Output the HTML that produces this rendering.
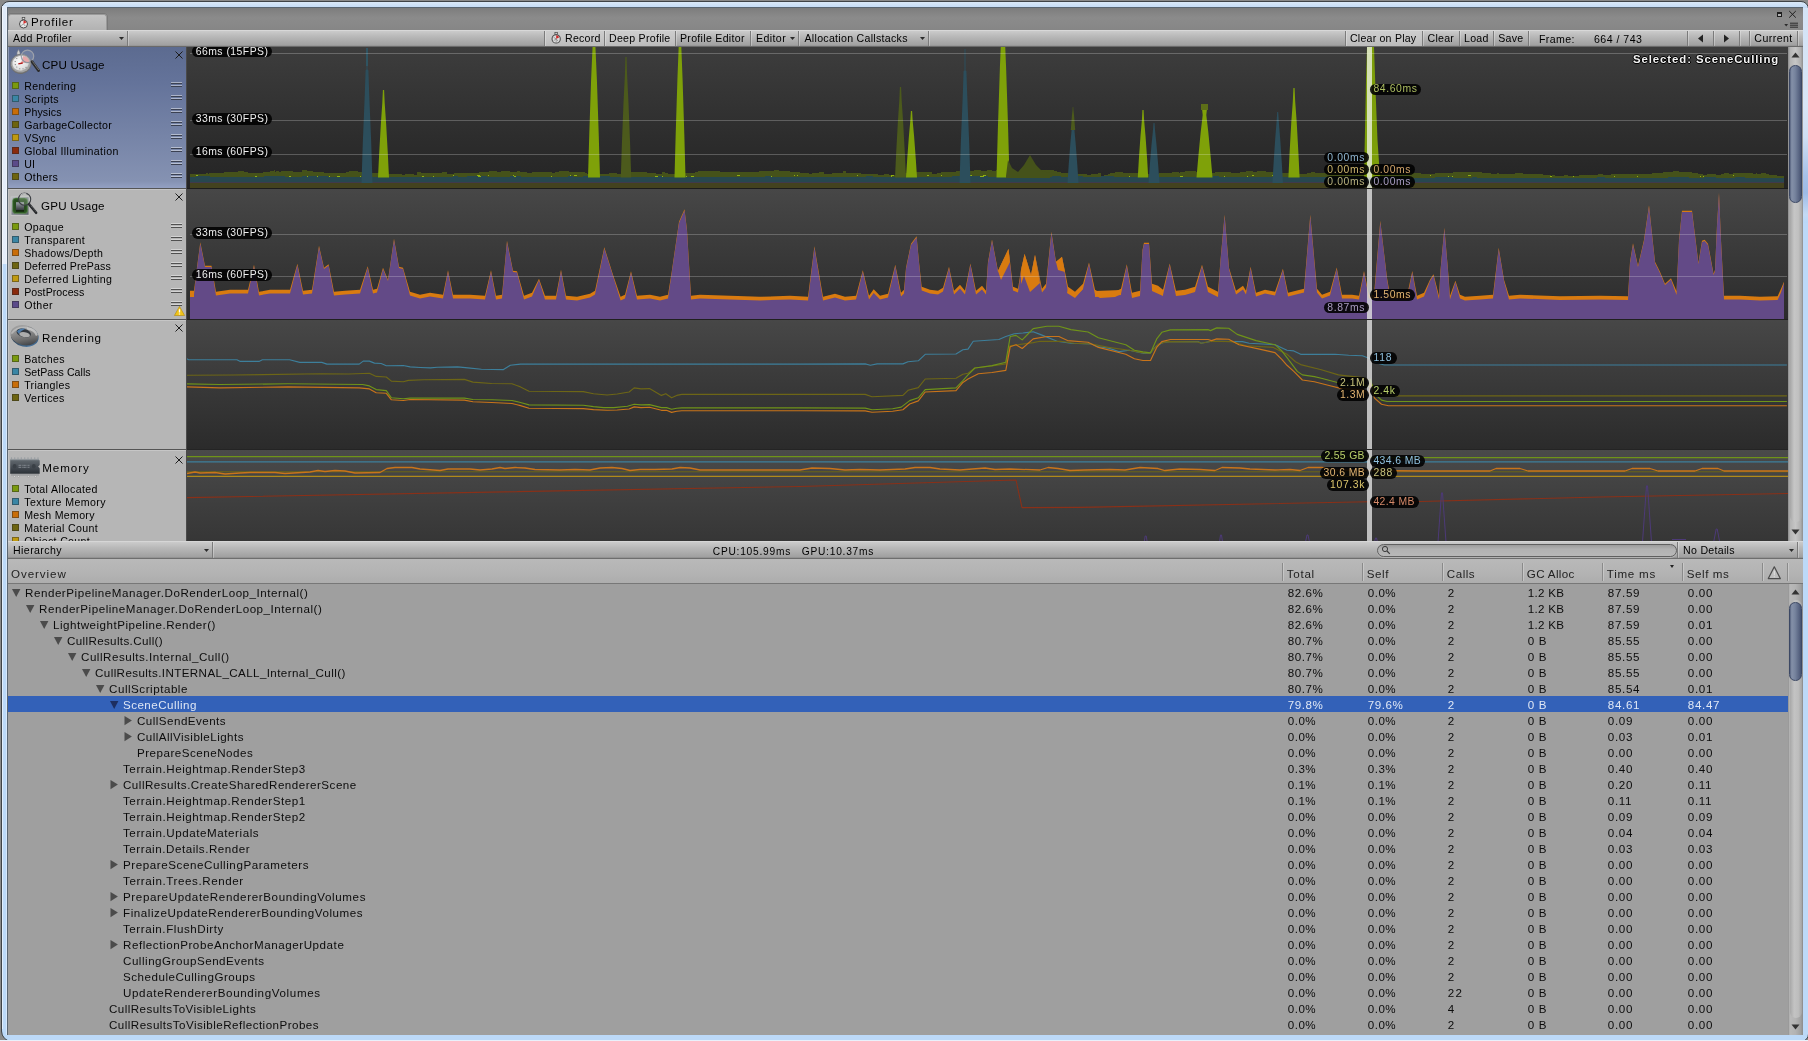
<!DOCTYPE html><html><head><meta charset="utf-8"><title>Profiler</title><style>
*{box-sizing:border-box;margin:0;padding:0}
html,body{width:1808px;height:1041px;overflow:hidden;background:#b9d7f5}
body{font-family:"Liberation Sans",sans-serif;position:relative;color:#000}
.abs{position:absolute}
.t{position:absolute;white-space:pre}
#inner{position:absolute;left:8px;top:8px;width:1795px;height:1027px;background:#a2a2a2;overflow:hidden;will-change:transform}
svg{position:absolute;overflow:visible}
</style></head><body>
<div class="abs" style="left:0;top:0;width:1808px;height:1041px;background:#8a8a8a"></div>
<div class="abs" style="left:1px;top:1px;width:1808px;height:1041px;border:1px solid #3f4347;border-radius:8px 8px 8px 11px;background:linear-gradient(#dbe9f8,#c5dcf6 5px,#bcd9f8 30px)"></div>
<div class="abs" style="left:7px;top:7px;width:1796px;height:1028px;background:#5a6672"></div>
<div class="abs" style="left:2px;top:6px;width:5px;height:258px;background:linear-gradient(#dfeaf8,#e3ecf8 60%,#e6eefa)"></div>
<div class="abs" style="left:1803px;top:8px;width:5px;height:215px;background:linear-gradient(#d3e3f6,#d9e6f6 45%,#cfdff3 60%,#a6c1e8 78%,#9dbbe6 86%,#c4daf4 96%,#b9d8f9)"></div>
<div class="abs" style="left:2px;top:8px;width:1px;height:1021px;background:rgba(255,255,255,.55)"></div>
<div class="abs" style="left:6px;top:8px;width:1px;height:1027px;background:rgba(255,255,255,.4)"></div>
<div class="abs" style="left:0;top:1040px;width:1808px;height:1px;background:#e9f1fb"></div>
<div id="inner">
<div class="abs" style="left:0px;top:0px;width:1795px;height:22px;background:linear-gradient(#7d7d7d,#8b8b8b 45%,#868686)"></div>
<div class="abs" style="left:0px;top:6px;width:99px;height:17px;border-radius:3px 3px 0 0;background:linear-gradient(#c4c4c4,#b1b1b1);border:1px solid #9a9a9a;border-bottom:none;box-shadow:0 0 0 .5px #6a6a6a"></div>
<svg style="left:10px;top:8.700px" width="12" height="12" viewBox="0 0 12 12"><rect x="4.2" y="0.6" width="2.6" height="2" fill="#ddd" stroke="#444" stroke-width=".7"/><circle cx="5.5" cy="7" r="4" fill="#e8e8e8" stroke="#4a4a4a" stroke-width="1"/><path d="M5.5 7V3.4A3.6 3.6 0 0 1 8.6 5.3z" fill="#d83030"/><path d="M5.5 7l-2.3 1.6M5.5 7l1.8 2" stroke="#888" stroke-width=".8"/></svg>
<div class="t" style="left:23.0px;top:6.0px;font-size:11.6px;letter-spacing:0.72px;line-height:16px;">Profiler</div>
<svg style="left:1768px;top:2px" width="28" height="20" viewBox="0 0 28 20"><rect x="1.500" y="2.500" width="4" height="4" fill="#b0b0b0" stroke="#1e1e1e"/><rect x="1" y="2" width="5" height="2" fill="#1e1e1e"/><path d="M13.200 1l6.600 6.600M19.800 1l-6.600 6.600" stroke="#1e1e1e" stroke-width="1" fill="none"/><path d="M8.300 14h3.800l-1.900 2.600z" fill="#2c2c2c"/><path d="M14 13.200h8M14 15.200h8M14 17.200h8" stroke="#2c2c2c" stroke-width="1"/></svg>
<div class="abs" style="left:0px;top:22px;width:1795px;height:17px;background:linear-gradient(#cbcbcb,#b9b9b9 35%,#a0a0a0 95%,#888);border-top:1px solid #d8d8d8;border-bottom:1px solid #6a6a6a"></div>
<div class="abs" style="left:537px;top:23px;width:59px;height:15px;background:linear-gradient(#cdcdcd,#c6c6c6 50%,#bbbbbb)"></div>
<div class="abs" style="left:597px;top:23px;width:70px;height:15px;background:linear-gradient(#cdcdcd,#c6c6c6 50%,#bbbbbb)"></div>
<div class="abs" style="left:1338px;top:23px;width:76px;height:15px;background:linear-gradient(#cdcdcd,#c6c6c6 50%,#bbbbbb)"></div>
<div class="abs" style="left:119px;top:23px;width:1px;height:15px;background:#7b7b7b"></div>
<div class="abs" style="left:120px;top:23px;width:1px;height:15px;background:rgba(255,255,255,.28)"></div>
<div class="abs" style="left:536px;top:23px;width:1px;height:15px;background:#7b7b7b"></div>
<div class="abs" style="left:537px;top:23px;width:1px;height:15px;background:rgba(255,255,255,.28)"></div>
<div class="abs" style="left:596px;top:23px;width:1px;height:15px;background:#7b7b7b"></div>
<div class="abs" style="left:597px;top:23px;width:1px;height:15px;background:rgba(255,255,255,.28)"></div>
<div class="abs" style="left:667px;top:23px;width:1px;height:15px;background:#7b7b7b"></div>
<div class="abs" style="left:668px;top:23px;width:1px;height:15px;background:rgba(255,255,255,.28)"></div>
<div class="abs" style="left:742px;top:23px;width:1px;height:15px;background:#7b7b7b"></div>
<div class="abs" style="left:743px;top:23px;width:1px;height:15px;background:rgba(255,255,255,.28)"></div>
<div class="abs" style="left:790px;top:23px;width:1px;height:15px;background:#7b7b7b"></div>
<div class="abs" style="left:791px;top:23px;width:1px;height:15px;background:rgba(255,255,255,.28)"></div>
<div class="abs" style="left:920px;top:23px;width:1px;height:15px;background:#7b7b7b"></div>
<div class="abs" style="left:921px;top:23px;width:1px;height:15px;background:rgba(255,255,255,.28)"></div>
<div class="abs" style="left:1337px;top:23px;width:1px;height:15px;background:#7b7b7b"></div>
<div class="abs" style="left:1338px;top:23px;width:1px;height:15px;background:rgba(255,255,255,.28)"></div>
<div class="abs" style="left:1414px;top:23px;width:1px;height:15px;background:#7b7b7b"></div>
<div class="abs" style="left:1415px;top:23px;width:1px;height:15px;background:rgba(255,255,255,.28)"></div>
<div class="abs" style="left:1451px;top:23px;width:1px;height:15px;background:#7b7b7b"></div>
<div class="abs" style="left:1452px;top:23px;width:1px;height:15px;background:rgba(255,255,255,.28)"></div>
<div class="abs" style="left:1485px;top:23px;width:1px;height:15px;background:#7b7b7b"></div>
<div class="abs" style="left:1486px;top:23px;width:1px;height:15px;background:rgba(255,255,255,.28)"></div>
<div class="abs" style="left:1520px;top:23px;width:1px;height:15px;background:#7b7b7b"></div>
<div class="abs" style="left:1521px;top:23px;width:1px;height:15px;background:rgba(255,255,255,.28)"></div>
<div class="abs" style="left:1679px;top:23px;width:1px;height:15px;background:#7b7b7b"></div>
<div class="abs" style="left:1680px;top:23px;width:1px;height:15px;background:rgba(255,255,255,.28)"></div>
<div class="abs" style="left:1705px;top:23px;width:1px;height:15px;background:#7b7b7b"></div>
<div class="abs" style="left:1706px;top:23px;width:1px;height:15px;background:rgba(255,255,255,.28)"></div>
<div class="abs" style="left:1731px;top:23px;width:1px;height:15px;background:#7b7b7b"></div>
<div class="abs" style="left:1732px;top:23px;width:1px;height:15px;background:rgba(255,255,255,.28)"></div>
<div class="abs" style="left:1741px;top:23px;width:1px;height:15px;background:#7b7b7b"></div>
<div class="abs" style="left:1742px;top:23px;width:1px;height:15px;background:rgba(255,255,255,.28)"></div>
<div class="abs" style="left:1789px;top:23px;width:1px;height:15px;background:#7b7b7b"></div>
<div class="abs" style="left:1790px;top:23px;width:1px;height:15px;background:rgba(255,255,255,.28)"></div>
<div class="t" style="left:5.0px;top:22.1px;font-size:10.6px;letter-spacing:0.29px;line-height:16px;">Add Profiler</div>
<svg style="left:111px;top:29px" width="5" height="3" viewBox="0 0 5 3"><path d="M0 0h5l-2.5 3z" fill="#2a2a2a"/></svg>
<svg style="left:543.400px;top:23.600px" width="11.500" height="12.650" viewBox="0 0 10 11"><rect x="3.4" y=".4" width="2.2" height="1.6" fill="#ccc" stroke="#444" stroke-width=".6"/><circle cx="4.5" cy="6" r="3.6" fill="#dedede" stroke="#4a4a4a" stroke-width=".9"/><path d="M4.5 6V2.900A3.100 3.100 0 0 1 7.200 4.500z" fill="#d02828"/><path d="M4.500 6l-2.200 1.500M4.500 6l1.700 2.100M4.500 6v2.800M4.500 6l-2.300-1.400" stroke="#8a8a8a" stroke-width=".7"/></svg>
<div class="t" style="left:557.0px;top:22.1px;font-size:10.6px;letter-spacing:0.25px;line-height:16px;">Record</div>
<div class="t" style="left:601.0px;top:22.1px;font-size:10.6px;letter-spacing:0.27px;line-height:16px;">Deep Profile</div>
<div class="t" style="left:672.0px;top:22.1px;font-size:10.6px;letter-spacing:0.29px;line-height:16px;">Profile Editor</div>
<div class="t" style="left:748.0px;top:22.1px;font-size:10.6px;letter-spacing:0.40px;line-height:16px;">Editor</div>
<svg style="left:782px;top:29px" width="5" height="3" viewBox="0 0 5 3"><path d="M0 0h5l-2.5 3z" fill="#2a2a2a"/></svg>
<div class="t" style="left:796.5px;top:22.1px;font-size:10.6px;letter-spacing:0.29px;line-height:16px;">Allocation Callstacks</div>
<svg style="left:911.5px;top:29px" width="5" height="3" viewBox="0 0 5 3"><path d="M0 0h5l-2.5 3z" fill="#2a2a2a"/></svg>
<div class="t" style="left:1342.0px;top:22.1px;font-size:10.6px;letter-spacing:0.21px;line-height:16px;">Clear on Play</div>
<div class="t" style="left:1419.5px;top:22.1px;font-size:10.6px;letter-spacing:0.26px;line-height:16px;">Clear</div>
<div class="t" style="left:1456.0px;top:22.1px;font-size:10.6px;letter-spacing:0.27px;line-height:16px;">Load</div>
<div class="t" style="left:1490.3px;top:22.1px;font-size:10.6px;letter-spacing:0.22px;line-height:16px;">Save</div>
<div class="t" style="left:1531.0px;top:23.1px;font-size:10.6px;letter-spacing:0.36px;line-height:16px;">Frame:</div>
<div class="t" style="left:1586.0px;top:23.1px;font-size:10.6px;letter-spacing:0.47px;line-height:16px;">664 / 743</div>
<svg style="left:1689px;top:26px" width="40" height="9" viewBox="0 0 40 9"><path d="M6 .5v8l-5-4z" fill="#222"/><path d="M27 .5v8l5-4z" fill="#222"/></svg>
<div class="t" style="left:1746.3px;top:22.1px;font-size:10.6px;letter-spacing:0.44px;line-height:16px;">Current</div>
<div class="abs" style="left:0px;top:39px;width:178px;height:141px;background:linear-gradient(#5c6b90,#64739a 25%,#8592b2 95%,#93a0c2);border-left:1px solid #8d98b3"></div>
<div class="abs" style="left:0px;top:180px;width:178px;height:1px;background:#555"></div>
<div class="abs" style="left:0px;top:181px;width:178px;height:130px;background:#b6b6b6;border-top:1px solid #c6c6c6;border-left:1px solid #c4c4c4"></div>
<div class="abs" style="left:0px;top:311px;width:178px;height:1px;background:#555"></div>
<div class="abs" style="left:0px;top:312px;width:178px;height:129px;background:#b6b6b6;border-top:1px solid #c6c6c6;border-left:1px solid #c4c4c4"></div>
<div class="abs" style="left:0px;top:441px;width:178px;height:1px;background:#555"></div>
<div class="abs" style="left:0px;top:442px;width:178px;height:91px;background:#b6b6b6;border-top:1px solid #c6c6c6;border-left:1px solid #c4c4c4"></div>
<div class="abs" style="left:178px;top:39px;width:1px;height:494px;background:#4a4a4a"></div>
<svg style="left:167px;top:42.5px" width="8" height="8" viewBox="0 0 8 8"><path d="M.5 .5l7 7M7.5 .5l-7 7" stroke="#1c1c1c" stroke-width="1" fill="none"/></svg>
<div class="t" style="left:34.0px;top:49.0px;font-size:11.6px;letter-spacing:0.17px;line-height:16px;">CPU Usage</div>
<div class="abs" style="left:4px;top:74.0px;width:7px;height:7px;background:#7a9a0e;border:1px solid rgba(40,40,40,.45)"></div>
<div class="t" style="left:16.2px;top:69.5px;font-size:10.6px;letter-spacing:0.34px;line-height:16px;">Rendering</div>
<div class="abs" style="left:163px;top:73.5px;width:11px;height:1px;background:rgba(255,255,255,.45)"></div>
<div class="abs" style="left:163px;top:74.5px;width:11px;height:1px;background:#3b4152"></div>
<div class="abs" style="left:163px;top:76.5px;width:11px;height:1px;background:rgba(255,255,255,.45)"></div>
<div class="abs" style="left:163px;top:77.5px;width:11px;height:1px;background:#3b4152"></div>
<div class="abs" style="left:4px;top:87.0px;width:7px;height:7px;background:#3a86a5;border:1px solid rgba(40,40,40,.45)"></div>
<div class="t" style="left:16.2px;top:82.5px;font-size:10.6px;letter-spacing:0.33px;line-height:16px;">Scripts</div>
<div class="abs" style="left:163px;top:86.5px;width:11px;height:1px;background:rgba(255,255,255,.45)"></div>
<div class="abs" style="left:163px;top:87.5px;width:11px;height:1px;background:#3b4152"></div>
<div class="abs" style="left:163px;top:89.5px;width:11px;height:1px;background:rgba(255,255,255,.45)"></div>
<div class="abs" style="left:163px;top:90.5px;width:11px;height:1px;background:#3b4152"></div>
<div class="abs" style="left:4px;top:100.0px;width:7px;height:7px;background:#c96d08;border:1px solid rgba(40,40,40,.45)"></div>
<div class="t" style="left:16.2px;top:95.5px;font-size:10.6px;letter-spacing:0.14px;line-height:16px;">Physics</div>
<div class="abs" style="left:163px;top:99.5px;width:11px;height:1px;background:rgba(255,255,255,.45)"></div>
<div class="abs" style="left:163px;top:100.5px;width:11px;height:1px;background:#3b4152"></div>
<div class="abs" style="left:163px;top:102.5px;width:11px;height:1px;background:rgba(255,255,255,.45)"></div>
<div class="abs" style="left:163px;top:103.5px;width:11px;height:1px;background:#3b4152"></div>
<div class="abs" style="left:4px;top:113.0px;width:7px;height:7px;background:#6d6410;border:1px solid rgba(40,40,40,.45)"></div>
<div class="t" style="left:16.2px;top:108.5px;font-size:10.6px;letter-spacing:0.30px;line-height:16px;">GarbageCollector</div>
<div class="abs" style="left:163px;top:112.5px;width:11px;height:1px;background:rgba(255,255,255,.45)"></div>
<div class="abs" style="left:163px;top:113.5px;width:11px;height:1px;background:#3b4152"></div>
<div class="abs" style="left:163px;top:115.5px;width:11px;height:1px;background:rgba(255,255,255,.45)"></div>
<div class="abs" style="left:163px;top:116.5px;width:11px;height:1px;background:#3b4152"></div>
<div class="abs" style="left:4px;top:126.0px;width:7px;height:7px;background:#c09a10;border:1px solid rgba(40,40,40,.45)"></div>
<div class="t" style="left:16.2px;top:121.5px;font-size:10.6px;letter-spacing:0.16px;line-height:16px;">VSync</div>
<div class="abs" style="left:163px;top:125.5px;width:11px;height:1px;background:rgba(255,255,255,.45)"></div>
<div class="abs" style="left:163px;top:126.5px;width:11px;height:1px;background:#3b4152"></div>
<div class="abs" style="left:163px;top:128.5px;width:11px;height:1px;background:rgba(255,255,255,.45)"></div>
<div class="abs" style="left:163px;top:129.5px;width:11px;height:1px;background:#3b4152"></div>
<div class="abs" style="left:4px;top:139.0px;width:7px;height:7px;background:#8a2a0c;border:1px solid rgba(40,40,40,.45)"></div>
<div class="t" style="left:16.2px;top:134.5px;font-size:10.6px;letter-spacing:0.39px;line-height:16px;">Global Illumination</div>
<div class="abs" style="left:163px;top:138.5px;width:11px;height:1px;background:rgba(255,255,255,.45)"></div>
<div class="abs" style="left:163px;top:139.5px;width:11px;height:1px;background:#3b4152"></div>
<div class="abs" style="left:163px;top:141.5px;width:11px;height:1px;background:rgba(255,255,255,.45)"></div>
<div class="abs" style="left:163px;top:142.5px;width:11px;height:1px;background:#3b4152"></div>
<div class="abs" style="left:4px;top:152.0px;width:7px;height:7px;background:#5b4a8a;border:1px solid rgba(40,40,40,.45)"></div>
<div class="t" style="left:16.2px;top:147.5px;font-size:10.6px;letter-spacing:0.08px;line-height:16px;">UI</div>
<div class="abs" style="left:163px;top:151.5px;width:11px;height:1px;background:rgba(255,255,255,.45)"></div>
<div class="abs" style="left:163px;top:152.5px;width:11px;height:1px;background:#3b4152"></div>
<div class="abs" style="left:163px;top:154.5px;width:11px;height:1px;background:rgba(255,255,255,.45)"></div>
<div class="abs" style="left:163px;top:155.5px;width:11px;height:1px;background:#3b4152"></div>
<div class="abs" style="left:4px;top:165.0px;width:7px;height:7px;background:#6d6410;border:1px solid rgba(40,40,40,.45)"></div>
<div class="t" style="left:16.2px;top:160.5px;font-size:10.6px;letter-spacing:0.38px;line-height:16px;">Others</div>
<div class="abs" style="left:163px;top:164.5px;width:11px;height:1px;background:rgba(255,255,255,.45)"></div>
<div class="abs" style="left:163px;top:165.5px;width:11px;height:1px;background:#3b4152"></div>
<div class="abs" style="left:163px;top:167.5px;width:11px;height:1px;background:rgba(255,255,255,.45)"></div>
<div class="abs" style="left:163px;top:168.5px;width:11px;height:1px;background:#3b4152"></div>
<svg style="left:167px;top:184.8px" width="8" height="8" viewBox="0 0 8 8"><path d="M.5 .5l7 7M7.5 .5l-7 7" stroke="#1c1c1c" stroke-width="1" fill="none"/></svg>
<div class="t" style="left:33.0px;top:189.7px;font-size:11.6px;letter-spacing:0.21px;line-height:16px;">GPU Usage</div>
<div class="abs" style="left:4px;top:215.0px;width:7px;height:7px;background:#7a9a0e;border:1px solid rgba(40,40,40,.45)"></div>
<div class="t" style="left:16.2px;top:210.5px;font-size:10.6px;letter-spacing:0.33px;line-height:16px;">Opaque</div>
<div class="abs" style="left:163px;top:214.5px;width:11px;height:1px;background:rgba(255,255,255,.4)"></div>
<div class="abs" style="left:163px;top:215.5px;width:11px;height:1px;background:#505050"></div>
<div class="abs" style="left:163px;top:217.5px;width:11px;height:1px;background:rgba(255,255,255,.4)"></div>
<div class="abs" style="left:163px;top:218.5px;width:11px;height:1px;background:#505050"></div>
<div class="abs" style="left:4px;top:228.0px;width:7px;height:7px;background:#3a86a5;border:1px solid rgba(40,40,40,.45)"></div>
<div class="t" style="left:16.2px;top:223.5px;font-size:10.6px;letter-spacing:0.39px;line-height:16px;">Transparent</div>
<div class="abs" style="left:163px;top:227.5px;width:11px;height:1px;background:rgba(255,255,255,.4)"></div>
<div class="abs" style="left:163px;top:228.5px;width:11px;height:1px;background:#505050"></div>
<div class="abs" style="left:163px;top:230.5px;width:11px;height:1px;background:rgba(255,255,255,.4)"></div>
<div class="abs" style="left:163px;top:231.5px;width:11px;height:1px;background:#505050"></div>
<div class="abs" style="left:4px;top:241.0px;width:7px;height:7px;background:#c96d08;border:1px solid rgba(40,40,40,.45)"></div>
<div class="t" style="left:16.2px;top:236.5px;font-size:10.6px;letter-spacing:0.32px;line-height:16px;">Shadows/Depth</div>
<div class="abs" style="left:163px;top:240.5px;width:11px;height:1px;background:rgba(255,255,255,.4)"></div>
<div class="abs" style="left:163px;top:241.5px;width:11px;height:1px;background:#505050"></div>
<div class="abs" style="left:163px;top:243.5px;width:11px;height:1px;background:rgba(255,255,255,.4)"></div>
<div class="abs" style="left:163px;top:244.5px;width:11px;height:1px;background:#505050"></div>
<div class="abs" style="left:4px;top:254.0px;width:7px;height:7px;background:#6d6410;border:1px solid rgba(40,40,40,.45)"></div>
<div class="t" style="left:16.2px;top:249.5px;font-size:10.6px;letter-spacing:0.16px;line-height:16px;">Deferred PrePass</div>
<div class="abs" style="left:163px;top:253.5px;width:11px;height:1px;background:rgba(255,255,255,.4)"></div>
<div class="abs" style="left:163px;top:254.5px;width:11px;height:1px;background:#505050"></div>
<div class="abs" style="left:163px;top:256.5px;width:11px;height:1px;background:rgba(255,255,255,.4)"></div>
<div class="abs" style="left:163px;top:257.5px;width:11px;height:1px;background:#505050"></div>
<div class="abs" style="left:4px;top:267.0px;width:7px;height:7px;background:#c09a10;border:1px solid rgba(40,40,40,.45)"></div>
<div class="t" style="left:16.2px;top:262.5px;font-size:10.6px;letter-spacing:0.41px;line-height:16px;">Deferred Lighting</div>
<div class="abs" style="left:163px;top:266.5px;width:11px;height:1px;background:rgba(255,255,255,.4)"></div>
<div class="abs" style="left:163px;top:267.5px;width:11px;height:1px;background:#505050"></div>
<div class="abs" style="left:163px;top:269.5px;width:11px;height:1px;background:rgba(255,255,255,.4)"></div>
<div class="abs" style="left:163px;top:270.5px;width:11px;height:1px;background:#505050"></div>
<div class="abs" style="left:4px;top:280.0px;width:7px;height:7px;background:#8a2a0c;border:1px solid rgba(40,40,40,.45)"></div>
<div class="t" style="left:16.2px;top:275.5px;font-size:10.6px;letter-spacing:0.06px;line-height:16px;">PostProcess</div>
<div class="abs" style="left:163px;top:279.5px;width:11px;height:1px;background:rgba(255,255,255,.4)"></div>
<div class="abs" style="left:163px;top:280.5px;width:11px;height:1px;background:#505050"></div>
<div class="abs" style="left:163px;top:282.5px;width:11px;height:1px;background:rgba(255,255,255,.4)"></div>
<div class="abs" style="left:163px;top:283.5px;width:11px;height:1px;background:#505050"></div>
<div class="abs" style="left:4px;top:293.0px;width:7px;height:7px;background:#5b4a8a;border:1px solid rgba(40,40,40,.45)"></div>
<div class="t" style="left:16.2px;top:288.5px;font-size:10.6px;letter-spacing:0.48px;line-height:16px;">Other</div>
<div class="abs" style="left:163px;top:292.5px;width:11px;height:1px;background:rgba(255,255,255,.4)"></div>
<div class="abs" style="left:163px;top:293.5px;width:11px;height:1px;background:#505050"></div>
<div class="abs" style="left:163px;top:295.5px;width:11px;height:1px;background:rgba(255,255,255,.4)"></div>
<div class="abs" style="left:163px;top:296.5px;width:11px;height:1px;background:#505050"></div>
<svg style="left:166px;top:298px" width="11" height="10" viewBox="0 0 11 10"><path d="M5.5 .4L10.6 9.5H.4z" fill="#f0c419" stroke="#b48a08" stroke-width=".6"/><path d="M5.5 3.2v3.2M5.5 7.4v1" stroke="#fff" stroke-width="1.3"/></svg>
<svg style="left:167px;top:315.5px" width="8" height="8" viewBox="0 0 8 8"><path d="M.5 .5l7 7M7.5 .5l-7 7" stroke="#1c1c1c" stroke-width="1" fill="none"/></svg>
<div class="t" style="left:34.0px;top:322.0px;font-size:11.6px;letter-spacing:0.69px;line-height:16px;">Rendering</div>
<div class="abs" style="left:4px;top:347.0px;width:7px;height:7px;background:#7a9a0e;border:1px solid rgba(40,40,40,.45)"></div>
<div class="t" style="left:16.2px;top:342.5px;font-size:10.6px;letter-spacing:0.33px;line-height:16px;">Batches</div>
<div class="abs" style="left:4px;top:360.0px;width:7px;height:7px;background:#3a86a5;border:1px solid rgba(40,40,40,.45)"></div>
<div class="t" style="left:16.2px;top:355.5px;font-size:10.6px;letter-spacing:0.04px;line-height:16px;">SetPass Calls</div>
<div class="abs" style="left:4px;top:373.0px;width:7px;height:7px;background:#c96d08;border:1px solid rgba(40,40,40,.45)"></div>
<div class="t" style="left:16.2px;top:368.5px;font-size:10.6px;letter-spacing:0.32px;line-height:16px;">Triangles</div>
<div class="abs" style="left:4px;top:386.0px;width:7px;height:7px;background:#6d6410;border:1px solid rgba(40,40,40,.45)"></div>
<div class="t" style="left:16.2px;top:381.5px;font-size:10.6px;letter-spacing:0.36px;line-height:16px;">Vertices</div>
<div class="abs" style="left:0;top:442px;width:178px;height:91px;overflow:hidden"><div style="position:absolute;left:-0px;top:-442px;width:178px;height:600px">
<svg style="left:167px;top:447.5px" width="8" height="8" viewBox="0 0 8 8"><path d="M.5 .5l7 7M7.5 .5l-7 7" stroke="#1c1c1c" stroke-width="1" fill="none"/></svg>
<div class="t" style="left:34.2px;top:452.2px;font-size:11.6px;letter-spacing:0.95px;line-height:16px;">Memory</div>
<div class="abs" style="left:4px;top:477.0px;width:7px;height:7px;background:#7a9a0e;border:1px solid rgba(40,40,40,.45)"></div>
<div class="t" style="left:16.2px;top:472.5px;font-size:10.6px;letter-spacing:0.35px;line-height:16px;">Total Allocated</div>
<div class="abs" style="left:4px;top:490.0px;width:7px;height:7px;background:#3a86a5;border:1px solid rgba(40,40,40,.45)"></div>
<div class="t" style="left:16.2px;top:485.5px;font-size:10.6px;letter-spacing:0.42px;line-height:16px;">Texture Memory</div>
<div class="abs" style="left:4px;top:503.0px;width:7px;height:7px;background:#c96d08;border:1px solid rgba(40,40,40,.45)"></div>
<div class="t" style="left:16.2px;top:498.5px;font-size:10.6px;letter-spacing:0.32px;line-height:16px;">Mesh Memory</div>
<div class="abs" style="left:4px;top:516.0px;width:7px;height:7px;background:#6d6410;border:1px solid rgba(40,40,40,.45)"></div>
<div class="t" style="left:16.2px;top:511.5px;font-size:10.6px;letter-spacing:0.36px;line-height:16px;">Material Count</div>
<div class="abs" style="left:4px;top:529.0px;width:7px;height:7px;background:#c09a10;border:1px solid rgba(40,40,40,.45)"></div>
<div class="t" style="left:16.2px;top:524.5px;font-size:10.6px;letter-spacing:0.34px;line-height:16px;">Object Count</div>
</div></div>
<svg style="left:2px;top:39px" width="34" height="32" viewBox="10 47 34 32">
<defs><radialGradient id="gw" cx=".42" cy=".38" r=".75"><stop offset="0" stop-color="#fbfbfb"/><stop offset=".72" stop-color="#dedede"/><stop offset="1" stop-color="#a8a8a8"/></radialGradient></defs>
<path d="M17 52.600l1.500-3.200 1.500 3.200v2.200h-3z" fill="#cfcfcf" stroke="#7f838c" stroke-width=".6"/>
<ellipse cx="20.900" cy="64.600" rx="10.300" ry="9.300" fill="#6e6e6e" transform="rotate(-12 20.900 64.600)"/>
<ellipse cx="20.900" cy="63.600" rx="10.300" ry="9.300" fill="#a4a4a4" stroke="#6f6f6f" stroke-width=".7" transform="rotate(-12 20.900 63.600)"/>
<ellipse cx="20.700" cy="63.200" rx="8.300" ry="7.400" fill="url(#gw)" transform="rotate(-12 20.700 63.200)"/>
<g fill="#6a6a6a"><circle cx="15.200" cy="61.500" r=".55"/><circle cx="15.300" cy="64.600" r=".55"/><circle cx="16.800" cy="67" r=".5"/><circle cx="19.800" cy="68.700" r=".5"/><circle cx="23" cy="68.800" r=".5"/><circle cx="26" cy="67.300" r=".55"/><circle cx="16.800" cy="58.600" r=".5"/></g>
<path d="M21 63.200L23.200 56A8 7.300 0 0 1 29.300 62z" fill="#e89a9a"/>
<circle cx="27.500" cy="56.300" r="6.200" fill="rgba(235,240,250,.14)" stroke="#9da1aa" stroke-width="1.200"/>
<path d="M22.300 59.500a6.200 6.200 0 0 0 9.500 1.800" fill="none" stroke="#8a8f96" stroke-width=".9"/>
<path d="M18.300 63.900l4.400-.9" stroke="#b01c1c" stroke-width="1.300"/>
<path d="M32 61.600l6.600 9" stroke="#2c2c2c" stroke-width="2.700" stroke-linecap="round"/>
<path d="M32.700 61.700l5.900 8" stroke="#8a8a8a" stroke-width=".7" stroke-linecap="round"/>
</svg>
<svg style="left:2px;top:182px" width="34" height="30" viewBox="10 190 34 30">
<defs><linearGradient id="gq" x1="0" y1="0" x2="1" y2="1"><stop offset="0" stop-color="#b9bcc0"/><stop offset=".5" stop-color="#7d838c"/><stop offset="1" stop-color="#5a5f68"/></linearGradient>
<linearGradient id="gq2" x1="0" y1="0" x2="0" y2="1"><stop offset="0" stop-color="#9aa0a6"/><stop offset="1" stop-color="#33373b"/></linearGradient></defs>
<rect x="10.600" y="196.400" width="18.800" height="19.400" fill="#c6c6c6"/>
<rect x="11.400" y="197.200" width="17.200" height="17.600" fill="url(#gq)"/>
<rect x="12.500" y="198" width="15.200" height="15.600" rx="3.400" fill="#2e5a24" stroke="#6f9a62" stroke-width=".5"/>
<rect x="14.200" y="199.800" width="11.800" height="12" rx="2" fill="#274d1e"/>
<rect x="16" y="202.200" width="8" height="8" fill="url(#gq2)"/>
<rect x="16" y="210.200" width="8" height="1.400" fill="#10200c"/>
<circle cx="24.600" cy="199.200" r="6.100" fill="rgba(215,225,215,.22)" stroke="#3d4045" stroke-width="1.100"/>
<path d="M20.300 195.300a6 6 0 0 1 6-2" fill="none" stroke="#d8d8d8" stroke-width=".8"/>
<path d="M29.300 204.500l6.800 8.300" stroke="#26282b" stroke-width="2.600" stroke-linecap="round"/>
<path d="M30 204.500l6 7.400" stroke="#a8a8a8" stroke-width=".6" stroke-dasharray="1 1"/>
</svg>
<svg style="left:1px;top:314px" width="34" height="28" viewBox="9 322 34 28">
<defs><linearGradient id="gt" x1=".15" y1="0" x2=".75" y2="1"><stop offset="0" stop-color="#a6a6a6"/><stop offset=".35" stop-color="#929292"/><stop offset=".7" stop-color="#6c6c6c"/><stop offset="1" stop-color="#3a3d42"/></linearGradient>
<linearGradient id="gt2" x1="0" y1="0" x2="1" y2="0"><stop offset="0" stop-color="#2c3a48"/><stop offset=".7" stop-color="#4a76a0"/><stop offset="1" stop-color="#3d6185"/></linearGradient></defs>
<ellipse cx="24.800" cy="336.400" rx="14" ry="10.300" fill="url(#gt2)" transform="rotate(12 24.800 336.400)"/>
<ellipse cx="24.300" cy="335.200" rx="14" ry="10" fill="url(#gt)" transform="rotate(12 24.300 335.200)"/>
<path d="M12 333c3-4 9-6 15-5.500" fill="none" stroke="#d6d6d6" stroke-width="1.800" opacity=".5" stroke-linecap="round"/>
<path d="M28 328.500c4 .8 7.500 3 8.500 6" fill="none" stroke="#e4e4e4" stroke-width="2.400" opacity=".6" stroke-linecap="round"/>
<ellipse cx="23.800" cy="333" rx="7.400" ry="4.200" fill="#33383e" transform="rotate(14 23.800 333)"/>
<path d="M17 331.500c1.500-2.600 5-3.600 8.500-2.600-2.500.6-5 2.200-6.500 5z" fill="#4f7dab"/>
<ellipse cx="24.600" cy="334.700" rx="5.400" ry="2.500" fill="#adadad" transform="rotate(10 24.600 334.600)"/>
</svg>
<svg style="left:1px;top:446px" width="34" height="26" viewBox="9 454 34 26">
<defs><linearGradient id="gm" x1="0" y1="0" x2="0" y2="1"><stop offset="0" stop-color="#7a8186"/><stop offset=".12" stop-color="#5d646a"/><stop offset=".55" stop-color="#454b52"/><stop offset="1" stop-color="#2a3036"/></linearGradient></defs>
<path d="M11.500 457.300v2.500M14.700 457.300v2.500M18 457.300v2.500M21.300 457.300v2.500M24.700 457.300v2.500M28 457.300v2.500M31.300 457.300v2.500M34.700 457.300v2.500M38 457.300v2.500" stroke="#9aa0a4" stroke-width="1.100"/>
<path d="M11 474.200h28v1.400h-28z" fill="#8b8f92" opacity=".7"/>
<g fill="#e6e6e6" stroke="#8f8f8f" stroke-width=".5"><circle cx="14.400" cy="476.600" r=".9"/><circle cx="18.500" cy="476.600" r=".9"/><circle cx="28.400" cy="476.600" r=".9"/><circle cx="35.400" cy="476.600" r=".9"/></g>
<path d="M10.200 459.400h28.600l.9 1v4.600l-1.600 1.600 1.600 1.600v5.600h-29.500z" fill="url(#gm)"/>
<path d="M10.200 459.400h28.600" stroke="#8e959a" stroke-width=".9"/>
<ellipse cx="14.600" cy="466.300" rx="1.900" ry="2.200" fill="#3a4046"/><ellipse cx="33.800" cy="466.300" rx="1.900" ry="2.200" fill="#3a4046"/>
<path d="M18.500 465.300h11M18.500 467.300h11" stroke="#8a9096" stroke-width=".9" stroke-dasharray="2.500 .7 1 .6"/>
</svg>
<svg style="left:179px;top:39px" width="1601" height="494" viewBox="187 47 1601 494">
<defs>
<linearGradient id="gc" x1="0" y1="0" x2="0" y2="1"><stop offset="0" stop-color="#3d3d3d"/><stop offset="1" stop-color="#242424"/></linearGradient>
<linearGradient id="gg" x1="0" y1="0" x2="0" y2="1"><stop offset="0" stop-color="#474747"/><stop offset="1" stop-color="#2b2b2b"/></linearGradient>
<linearGradient id="gm2" x1="0" y1="0" x2="0" y2="1"><stop offset="0" stop-color="#4a4a4a"/><stop offset="1" stop-color="#363636"/></linearGradient>
<clipPath id="ccpu"><rect x="190" y="47" width="1594" height="141"/></clipPath>
<clipPath id="cgpu"><rect x="190" y="189" width="1594" height="130"/></clipPath>
<clipPath id="cren"><rect x="187" y="320" width="1601" height="129"/></clipPath>
<clipPath id="cmem"><rect x="187" y="450" width="1601" height="91"/></clipPath>
</defs>
<rect x="187" y="47" width="1601" height="141" fill="url(#gc)"/>
<rect x="187" y="188" width="1601" height="1" fill="#1c1c1c"/>
<rect x="187" y="189" width="1601" height="130" fill="url(#gg)"/>
<rect x="187" y="319" width="1601" height="1" fill="#202020"/>
<rect x="187" y="320" width="1601" height="129" fill="url(#gg)"/>
<rect x="187" y="449" width="1601" height="1" fill="#242424"/>
<rect x="187" y="450" width="1601" height="91" fill="url(#gm2)"/>
<g clip-path="url(#ccpu)" shape-rendering="crispEdges">
<path d="M190.0 174.5 L199.0 174.1 L199.0 174.1 L208.0 173.3 L208.0 173.6 L217.0 172.8 L217.0 173.2 L224.0 172.8 L224.0 172.1 L229.0 172.0 L229.0 172.0 L238.0 172.1 L238.0 171.2 L244.0 171.4 L244.0 172.4 L251.0 172.6 L251.0 172.6 L260.0 172.6 L260.0 172.7 L263.0 172.6 L263.0 172.5 L270.0 172.0 L270.0 170.8 L275.0 170.4 L275.0 171.6 L279.0 171.3 L279.0 171.6 L284.0 171.3 L284.0 170.9 L287.0 170.8 L287.0 170.8 L293.0 170.6 L293.0 172.2 L302.0 172.5 L302.0 169.7 L307.0 170.1 L307.0 171.2 L310.0 171.5 L310.0 170.6 L313.0 170.9 L313.0 171.8 L318.0 172.2 L318.0 172.2 L321.0 172.4 L321.0 172.1 L324.0 172.3 L324.0 172.6 L332.0 172.8 L332.0 172.8 L339.0 172.7 L339.0 172.7 L344.0 172.6 L344.0 172.6 L349.0 172.4 L349.0 170.8 L358.0 170.6 L358.0 172.0 L366.0 172.2 L366.0 172.4 L372.0 172.7 L372.0 172.8 L379.0 173.4 L379.0 173.4 L383.0 173.8 L383.0 173.8 L389.0 174.2 L389.0 173.6 L393.0 173.8 L393.0 174.0 L402.0 174.1 L402.0 175.0 L405.0 174.9 L405.0 174.4 L414.0 173.8 L414.0 174.9 L417.0 174.6 L417.0 172.0 L421.0 171.7 L421.0 173.3 L430.0 172.8 L430.0 173.3 L435.0 173.2 L435.0 172.7 L438.0 172.7 L438.0 172.7 L442.0 172.8 L442.0 171.8 L447.0 172.0 L447.0 173.7 L454.0 174.0 L454.0 173.3 L458.0 173.4 L458.0 173.4 L462.0 173.4 L462.0 173.4 L471.0 173.1 L471.0 173.5 L475.0 173.3 L475.0 172.9 L482.0 172.2 L482.0 172.2 L488.0 171.6 L488.0 171.6 L494.0 171.1 L494.0 170.9 L497.0 170.8 L497.0 172.5 L501.0 172.3 L501.0 170.8 L510.0 170.9 L510.0 171.7 L517.0 172.1 L517.0 171.3 L520.0 171.5 L520.0 171.5 L527.0 172.0 L527.0 173.0 L532.0 173.2 L532.0 172.2 L536.0 172.3 L536.0 172.2 L542.0 172.1 L542.0 172.2 L545.0 172.1 L545.0 172.1 L552.0 171.8 L552.0 173.4 L555.0 173.2 L555.0 171.7 L561.0 171.4 L561.0 171.4 L569.0 171.4 L569.0 172.4 L573.0 172.5 L573.0 171.6 L576.0 171.8 L576.0 171.7 L584.0 172.4 L584.0 172.4 L587.0 172.8 L587.0 173.8 L593.0 174.4 L593.0 172.2 L598.0 172.6 L598.0 173.8 L601.0 174.0 L601.0 174.0 L609.0 174.2 L609.0 172.7 L617.0 172.5 L617.0 173.9 L622.0 173.7 L622.0 173.7 L628.0 173.3 L628.0 171.9 L634.0 171.7 L634.0 171.7 L641.0 171.6 L641.0 172.0 L647.0 172.2 L647.0 173.2 L654.0 173.5 L654.0 173.4 L662.0 173.8 L662.0 172.4 L668.0 172.6 L668.0 174.1 L676.0 174.0 L676.0 174.8 L682.0 174.4 L682.0 173.8 L691.0 173.0 L691.0 172.9 L698.0 172.2 L698.0 171.3 L702.0 171.0 L702.0 171.0 L709.0 170.6 L709.0 171.4 L712.0 171.4 L712.0 171.4 L720.0 171.5 L720.0 171.8 L724.0 172.0 L724.0 171.7 L730.0 172.0 L730.0 172.0 L735.0 172.2 L735.0 172.2 L739.0 172.3 L739.0 172.3 L748.0 172.1 L748.0 172.1 L754.0 171.8 L754.0 171.8 L759.0 171.5 L759.0 171.5 L765.0 171.1 L765.0 171.1 L774.0 170.8 L774.0 169.6 L779.0 169.7 L779.0 170.8 L785.0 171.1 L785.0 171.1 L794.0 171.9 L794.0 171.9 L801.0 172.6 L801.0 172.6 L809.0 173.2 L809.0 173.9 L812.0 174.1 L812.0 172.9 L819.0 173.0 L819.0 172.3 L824.0 172.2 L824.0 173.9 L832.0 173.5 L832.0 173.0 L836.0 172.9 L836.0 172.8 L839.0 172.7 L839.0 172.7 L843.0 172.7 L843.0 171.1 L846.0 171.1 L846.0 172.7 L853.0 173.0 L853.0 173.0 L861.0 173.5 L861.0 173.5 L867.0 174.0 L867.0 174.0 L870.0 174.2 L870.0 174.2 L873.0 174.4 L873.0 174.4 L882.0 174.6 L882.0 174.6 L889.0 174.3 L889.0 175.3 L898.0 174.5 L898.0 173.5 L907.0 172.7 L907.0 172.7 L915.0 172.3 L915.0 172.3 L921.0 172.2 L921.0 172.2 L924.0 172.2 L924.0 172.2 L932.0 172.5 L932.0 173.7 L937.0 173.9 L937.0 172.7 L941.0 172.8 L941.0 171.6 L950.0 171.6 L950.0 172.4 L956.0 172.2 L956.0 171.0 L963.0 170.4 L963.0 172.0 L971.0 171.3 L971.0 170.7 L974.0 170.5 L974.0 170.3 L981.0 170.0 L981.0 170.7 L987.0 170.6 L987.0 170.3 L996.0 170.7 L996.0 170.3 L999.0 170.5 L999.0 171.2 L1007.0 169.9 L1007.0 169.9 L1014.0 170.4 L1014.0 171.7 L1022.0 172.0 L1022.0 170.6 L1028.0 170.6 L1028.0 172.1 L1031.0 172.0 L1031.0 170.5 L1038.0 170.2 L1038.0 170.2 L1045.0 170.0 L1045.0 170.0 L1054.0 170.1 L1054.0 170.5 L1062.0 172.9 L1062.0 172.5 L1071.0 173.3 L1071.0 173.7 L1080.0 174.5 L1080.0 174.1 L1087.0 174.5 L1087.0 174.5 L1091.0 174.5 L1091.0 174.5 L1098.0 174.3 L1098.0 173.3 L1101.0 173.2 L1101.0 175.7 L1108.0 175.2 L1108.0 173.6 L1115.0 173.2 L1115.0 172.4 L1123.0 172.1 L1123.0 172.8 L1130.0 172.9 L1130.0 172.9 L1139.0 173.2 L1139.0 173.2 L1145.0 173.5 L1145.0 173.5 L1151.0 173.6 L1151.0 173.6 L1154.0 173.6 L1154.0 173.6 L1157.0 173.6 L1157.0 173.6 L1166.0 173.1 L1166.0 173.0 L1170.0 172.6 L1170.0 172.7 L1175.0 172.2 L1175.0 172.2 L1179.0 171.8 L1179.0 172.6 L1185.0 172.1 L1185.0 171.5 L1192.0 171.1 L1192.0 171.3 L1196.0 171.3 L1196.0 172.3 L1199.0 172.3 L1199.0 170.9 L1208.0 171.4 L1208.0 172.3 L1215.0 172.8 L1215.0 171.8 L1222.0 172.1 L1222.0 172.1 L1231.0 172.2 L1231.0 173.2 L1240.0 172.8 L1240.0 171.9 L1248.0 171.4 L1248.0 171.4 L1253.0 171.3 L1253.0 171.8 L1257.0 171.7 L1257.0 171.2 L1261.0 171.3 L1261.0 171.0 L1265.0 171.2 L1265.0 171.4 L1270.0 171.8 L1270.0 171.8 L1279.0 172.6 L1279.0 172.6 L1287.0 173.4 L1287.0 173.4 L1295.0 173.9 L1295.0 173.8 L1302.0 173.8 L1302.0 174.0 L1307.0 173.9 L1307.0 172.7 L1315.0 172.3 L1315.0 173.5 L1323.0 173.1 L1323.0 173.1 L1329.0 173.0 L1329.0 172.9 L1338.0 173.1 L1338.0 174.2 L1345.0 174.6 L1345.0 173.6 L1349.0 173.8 L1349.0 173.5 L1358.0 173.9 L1358.0 174.2 L1366.0 174.2 L1366.0 173.3 L1370.0 173.1 L1370.0 174.1 L1373.0 173.9 L1373.0 173.9 L1379.0 173.3 L1379.0 173.9 L1383.0 174.7 L1383.0 174.7 L1391.0 174.0 L1391.0 172.0 L1395.0 171.7 L1395.0 173.1 L1403.0 172.8 L1403.0 172.8 L1407.0 172.8 L1407.0 173.1 L1414.0 173.3 L1414.0 172.5 L1417.0 172.6 L1417.0 173.1 L1421.0 173.3 L1421.0 174.3 L1426.0 174.4 L1426.0 173.5 L1429.0 173.6 L1429.0 173.6 L1435.0 173.5 L1435.0 173.5 L1442.0 173.3 L1442.0 173.3 L1451.0 172.6 L1451.0 172.6 L1459.0 172.1 L1459.0 172.1 L1464.0 171.9 L1464.0 171.9 L1467.0 171.9 L1467.0 171.9 L1474.0 172.1 L1474.0 171.7 L1482.0 172.3 L1482.0 172.7 L1490.0 173.4 L1490.0 173.4 L1497.0 174.0 L1497.0 173.4 L1503.0 173.7 L1503.0 174.3 L1512.0 174.4 L1512.0 174.4 L1515.0 174.3 L1515.0 173.3 L1523.0 173.0 L1523.0 174.0 L1529.0 173.8 L1529.0 173.9 L1533.0 173.8 L1533.0 173.7 L1538.0 173.8 L1538.0 173.8 L1543.0 174.0 L1543.0 174.9 L1549.0 175.3 L1549.0 175.3 L1552.0 175.6 L1552.0 174.7 L1555.0 174.9 L1555.0 175.9 L1564.0 176.5 L1564.0 174.9 L1568.0 175.1 L1568.0 175.7 L1572.0 175.8 L1572.0 175.8 L1579.0 175.6 L1579.0 174.9 L1585.0 174.5 L1585.0 175.2 L1591.0 174.7 L1591.0 175.2 L1598.0 174.6 L1598.0 174.1 L1603.0 173.8 L1603.0 175.3 L1611.0 175.1 L1611.0 173.6 L1620.0 173.7 L1620.0 173.7 L1628.0 174.0 L1628.0 174.0 L1636.0 174.2 L1636.0 174.2 L1641.0 174.2 L1641.0 174.2 L1649.0 173.8 L1649.0 173.8 L1653.0 173.4 L1653.0 173.4 L1658.0 173.0 L1658.0 173.0 L1661.0 172.7 L1661.0 172.7 L1670.0 172.0 L1670.0 172.0 L1673.0 171.9 L1673.0 170.9 L1679.0 170.8 L1679.0 171.5 L1682.0 171.6 L1682.0 171.9 L1685.0 172.1 L1685.0 172.1 L1693.0 172.6 L1693.0 172.6 L1698.0 173.0 L1698.0 174.1 L1703.0 174.4 L1703.0 174.7 L1707.0 174.9 L1707.0 173.6 L1711.0 173.7 L1711.0 173.7 L1716.0 173.7 L1716.0 174.7 L1721.0 174.6 L1721.0 173.6 L1729.0 173.3 L1729.0 174.4 L1733.0 174.2 L1733.0 173.1 L1737.0 173.0 L1737.0 173.0 L1745.0 173.0 L1745.0 173.0 L1748.0 173.2 L1748.0 173.2 L1753.0 173.5 L1753.0 173.5 L1756.0 173.8 L1756.0 173.4 L1761.0 173.9 L1761.0 173.0 L1769.0 173.8 L1769.0 175.0 L1777.0 175.5 L1777.0 175.5 L1782.0 175.6 L1782.0 175.6 L1784.0 175.6 L1784.0 188 L190.0 188 Z" fill="#45521a"/>
<path d="M190.0 176.5 L196.0 176.5 L196.0 176.1 L210.0 176.1 L210.0 176.5 L219.0 176.5 L219.0 176.5 L229.0 176.5 L229.0 176.5 L243.0 176.5 L243.0 176.5 L250.0 176.5 L250.0 176.5 L264.0 176.5 L264.0 176.1 L274.0 176.1 L274.0 176.0 L285.0 176.0 L285.0 177.0 L297.0 177.0 L297.0 176.5 L302.0 176.5 L302.0 176.2 L316.0 176.2 L316.0 175.9 L328.0 175.9 L328.0 176.5 L335.0 176.5 L335.0 176.5 L345.0 176.5 L345.0 176.5 L355.0 176.5 L355.0 176.5 L364.0 176.5 L364.0 176.5 L373.0 176.5 L373.0 176.5 L384.0 176.5 L384.0 176.7 L394.0 176.7 L394.0 176.5 L405.0 176.5 L405.0 176.8 L413.0 176.8 L413.0 176.8 L424.0 176.8 L424.0 176.6 L438.0 176.6 L438.0 176.7 L444.0 176.7 L444.0 176.5 L453.0 176.5 L453.0 176.3 L458.0 176.3 L458.0 176.6 L467.0 176.6 L467.0 175.9 L478.0 175.9 L478.0 176.0 L487.0 176.0 L487.0 176.6 L493.0 176.6 L493.0 176.5 L503.0 176.5 L503.0 176.5 L510.0 176.5 L510.0 175.8 L521.0 175.8 L521.0 176.5 L533.0 176.5 L533.0 176.8 L545.0 176.8 L545.0 176.5 L555.0 176.5 L555.0 176.5 L568.0 176.5 L568.0 175.9 L573.0 175.9 L573.0 176.5 L583.0 176.5 L583.0 175.8 L589.0 175.8 L589.0 176.5 L594.0 176.5 L594.0 176.8 L599.0 176.8 L599.0 176.1 L610.0 176.1 L610.0 176.5 L617.0 176.5 L617.0 176.5 L627.0 176.5 L627.0 176.5 L640.0 176.5 L640.0 176.5 L645.0 176.5 L645.0 176.5 L651.0 176.5 L651.0 176.5 L658.0 176.5 L658.0 175.8 L663.0 175.8 L663.0 176.9 L668.0 176.9 L668.0 176.5 L675.0 176.5 L675.0 176.5 L683.0 176.5 L683.0 177.1 L697.0 177.1 L697.0 176.7 L704.0 176.7 L704.0 176.5 L713.0 176.5 L713.0 177.3 L726.0 177.3 L726.0 176.5 L738.0 176.5 L738.0 176.5 L748.0 176.5 L748.0 177.2 L754.0 177.2 L754.0 176.5 L765.0 176.5 L765.0 176.3 L772.0 176.3 L772.0 176.5 L785.0 176.5 L785.0 176.5 L790.0 176.5 L790.0 176.5 L802.0 176.5 L802.0 176.5 L810.0 176.5 L810.0 176.5 L817.0 176.5 L817.0 176.5 L827.0 176.5 L827.0 176.5 L840.0 176.5 L840.0 176.5 L854.0 176.5 L854.0 176.5 L859.0 176.5 L859.0 176.5 L866.0 176.5 L866.0 176.3 L873.0 176.3 L873.0 176.5 L882.0 176.5 L882.0 177.1 L888.0 177.1 L888.0 176.5 L894.0 176.5 L894.0 177.0 L907.0 177.0 L907.0 176.5 L915.0 176.5 L915.0 176.5 L921.0 176.5 L921.0 176.5 L934.0 176.5 L934.0 176.5 L941.0 176.5 L941.0 176.5 L952.0 176.5 L952.0 176.0 L964.0 176.0 L964.0 176.2 L971.0 176.2 L971.0 175.9 L983.0 175.9 L983.0 175.9 L988.0 175.9 L988.0 176.5 L1000.0 176.5 L1000.0 176.5 L1006.0 176.5 L1006.0 176.5 L1014.0 176.5 L1014.0 176.6 L1025.0 176.6 L1025.0 177.2 L1035.0 177.2 L1035.0 176.5 L1041.0 176.5 L1041.0 176.5 L1052.0 176.5 L1052.0 176.2 L1061.0 176.2 L1061.0 176.9 L1071.0 176.9 L1071.0 176.5 L1077.0 176.5 L1077.0 176.4 L1083.0 176.4 L1083.0 176.5 L1090.0 176.5 L1090.0 176.5 L1095.0 176.5 L1095.0 176.5 L1101.0 176.5 L1101.0 176.3 L1108.0 176.3 L1108.0 176.1 L1114.0 176.1 L1114.0 176.5 L1125.0 176.5 L1125.0 176.6 L1133.0 176.6 L1133.0 176.5 L1144.0 176.5 L1144.0 176.5 L1155.0 176.5 L1155.0 176.5 L1166.0 176.5 L1166.0 177.1 L1174.0 177.1 L1174.0 177.0 L1183.0 177.0 L1183.0 176.5 L1192.0 176.5 L1192.0 176.5 L1203.0 176.5 L1203.0 176.5 L1212.0 176.5 L1212.0 175.9 L1219.0 175.9 L1219.0 176.5 L1228.0 176.5 L1228.0 176.7 L1242.0 176.7 L1242.0 177.0 L1256.0 177.0 L1256.0 176.5 L1269.0 176.5 L1269.0 176.5 L1274.0 176.5 L1274.0 176.5 L1281.0 176.5 L1281.0 176.5 L1292.0 176.5 L1292.0 176.5 L1302.0 176.5 L1302.0 176.5 L1308.0 176.5 L1308.0 176.5 L1315.0 176.5 L1315.0 176.5 L1328.0 176.5 L1328.0 177.0 L1341.0 177.0 L1341.0 176.5 L1351.0 176.5 L1351.0 176.6 L1356.0 176.6 L1356.0 176.5 L1366.0 176.5 L1366.0 176.5 L1376.0 176.5 L1376.0 176.5 L1389.0 177.5 L1389.0 177.1 L1400.0 177.1 L1400.0 177.5 L1407.0 177.5 L1407.0 177.5 L1418.0 177.5 L1418.0 178.0 L1423.0 178.0 L1423.0 177.5 L1435.0 177.5 L1435.0 177.4 L1446.0 177.4 L1446.0 177.0 L1453.0 177.0 L1453.0 177.5 L1462.0 177.5 L1462.0 177.5 L1472.0 177.5 L1472.0 176.9 L1477.0 176.9 L1477.0 177.5 L1489.0 177.5 L1489.0 177.6 L1499.0 177.6 L1499.0 177.5 L1513.0 177.5 L1513.0 177.5 L1525.0 177.5 L1525.0 177.5 L1536.0 177.5 L1536.0 177.5 L1542.0 177.5 L1542.0 177.8 L1555.0 177.8 L1555.0 177.5 L1560.0 177.5 L1560.0 177.5 L1569.0 177.5 L1569.0 178.3 L1580.0 178.3 L1580.0 177.8 L1589.0 177.8 L1589.0 178.3 L1597.0 178.3 L1597.0 176.7 L1605.0 176.7 L1605.0 178.3 L1610.0 178.3 L1610.0 177.5 L1623.0 177.5 L1623.0 177.5 L1634.0 177.5 L1634.0 177.5 L1644.0 177.5 L1644.0 177.9 L1651.0 177.9 L1651.0 177.5 L1662.0 177.5 L1662.0 177.6 L1668.0 177.6 L1668.0 177.0 L1675.0 177.0 L1675.0 176.7 L1689.0 176.7 L1689.0 177.5 L1697.0 177.5 L1697.0 177.5 L1704.0 177.5 L1704.0 177.1 L1716.0 177.1 L1716.0 177.9 L1726.0 177.9 L1726.0 177.7 L1735.0 177.7 L1735.0 177.1 L1745.0 177.1 L1745.0 177.5 L1752.0 177.5 L1752.0 177.5 L1760.0 177.5 L1760.0 177.5 L1765.0 177.5 L1765.0 177.5 L1775.0 177.5 L1775.0 177.5 L1784.0 177.5 L1784.0 188 L190.0 188 Z" fill="#27474f"/>
<rect x="190" y="182.3" width="1594" height="1" fill="#3f3a4c"/>
<rect x="190" y="183.2" width="1594" height="5" fill="#43421f"/>
<path d="M513 175.2h1v1h-1zM1700 176.4h1v1h-1zM360 175.8h1v1h-1zM1573 175.8h1v1h-1zM1297 175.8h2v1h-2zM317 175.8h1v1h-1zM384 175.8h1v1h-1zM479 176.4h1v1h-1zM1247 175.8h1v1h-1zM1468 175.2h3v1h-3zM1129 175.8h1v1h-1zM1614 176.4h1v1h-1zM551 176.4h1v1h-1zM1252 175.2h2v1h-2zM891 175.2h3v1h-3zM1035 175.2h1v1h-1zM1144 176.4h1v1h-1zM590 175.2h3v1h-3zM453 175.2h1v1h-1zM477 175.2h3v1h-3zM488 175.2h1v1h-1zM1180 175.8h3v1h-3zM196 175.2h2v1h-2zM478 176.4h3v1h-3zM1637 176.4h1v1h-1zM960 176.4h1v1h-1zM655 176.4h3v1h-3zM1703 176.4h1v1h-1zM1430 175.2h1v1h-1zM1158 176.4h1v1h-1zM891 176.4h1v1h-1zM1448 175.8h1v1h-1zM969 176.4h1v1h-1zM1150 175.2h1v1h-1zM514 176.4h1v1h-1zM904 175.8h1v1h-1zM433 176.4h1v1h-1zM980 176.4h2v1h-2zM893 175.2h1v1h-1zM307 176.4h1v1h-1zM1208 176.4h3v1h-3zM570 175.2h1v1h-1zM686 176.4h1v1h-1zM691 176.4h3v1h-3zM1026 176.4h1v1h-1zM983 175.2h3v1h-3zM794 175.2h1v1h-1zM981 175.8h3v1h-3zM289 175.8h2v1h-2zM771 176.4h1v1h-1zM1733 175.2h1v1h-1zM969 175.2h3v1h-3zM422 176.4h2v1h-2zM1375 175.2h1v1h-1zM574 175.2h3v1h-3zM337 175.8h3v1h-3zM941 175.2h1v1h-1zM1272 175.2h3v1h-3zM662 176.4h1v1h-1zM1550 175.8h2v1h-2zM329 175.8h1v1h-1zM682 175.2h3v1h-3zM255 176.4h2v1h-2zM1224 176.4h1v1h-1zM737 175.2h3v1h-3zM927 175.2h2v1h-2zM797 175.2h1v1h-1zM857 175.2h1v1h-1zM1452 175.8h1v1h-1zM515 176.4h1v1h-1z" fill="#8fb010"/>
</g><g clip-path="url(#ccpu)">
<path d="M361.5 183.0 L362.8 142.5 L363.8 118.2 L364.8 93.9 L365.6 70.3 L366.5 69.6 L366.5 48.0 L367.5 48.0 L367.5 69.6 L368.4 70.3 L369.2 93.9 L370.2 118.2 L371.2 142.5 L372.5 183.0Z" fill="#2c4e5c"/>
<path d="M366.5 66h1V48h-1z" fill="#2c6478"/>
<path d="M378.0 177.5 L379.2 153.0 L380.9 123.2 L382.3 103.1 L382.9 90.0 L384.1 90.0 L384.7 103.1 L386.1 123.2 L387.8 153.0 L389.0 177.5Z" fill="#7fa109"/>
<path d="M588.0 177.5 L589.3 133.4 L591.1 79.8 L592.7 43.6 L592.5 20.0 L595.5 20.0 L595.3 43.6 L596.9 79.8 L598.7 133.4 L600.0 177.5Z" fill="#7fa109"/>
<path d="M620.8 177.5 L621.9 143.8 L623.5 102.8 L624.9 75.1 L625.4 57.0 L626.6 57.0 L627.1 75.1 L628.5 102.8 L630.1 143.8 L631.2 177.5Z" fill="#4c5a1c"/>
<path d="M674.5 177.5 L675.7 133.4 L677.4 79.8 L678.8 43.6 L678.8 20.0 L681.2 20.0 L681.2 43.6 L682.6 79.8 L684.3 133.4 L685.5 177.5Z" fill="#7fa109"/>
<path d="M895.0 177.5 L896.2 152.2 L897.9 121.4 L899.3 100.6 L899.9 87.0 L901.1 87.0 L901.7 100.6 L903.1 121.4 L904.8 152.2 L906.0 177.5Z" fill="#4c5a1c"/>
<path d="M906.0 177.5 L907.2 158.9 L908.9 136.3 L910.3 121.0 L910.9 111.0 L912.1 111.0 L912.7 121.0 L914.1 136.3 L915.8 158.9 L917.0 177.5Z" fill="#7fa109"/>
<path d="M959.5 183.0 L960.8 142.8 L961.8 118.7 L962.8 94.6 L963.6 71.1 L964.5 70.4 L964.5 49.0 L965.5 49.0 L965.5 70.4 L966.4 71.1 L967.2 94.6 L968.2 118.7 L969.2 142.8 L970.5 183.0Z" fill="#2c4e5c"/>
<path d="M996.5 177.5 L997.9 127.8 L999.9 67.5 L1001.6 26.6 L1000.6 0.0 L1005.4 0.0 L1004.4 26.6 L1006.1 67.5 L1008.1 127.8 L1009.5 177.5Z" fill="#7fa109"/>
<path d="M1006.0 176.0 L1008.0 160.0 L1012.0 168.0 L1018.0 172.0 L1024.0 165.0 L1030.0 155.0 L1036.0 165.0 L1042.0 171.0 L1050.0 173.0 L1050.0 178 L1006.0 178 Z" fill="#45521a"/>
<path d="M1067.5 183.0 L1068.7 164.8 L1070.4 142.7 L1071.8 127.8 L1072.5 118.0 L1073.5 118.0 L1074.2 127.8 L1075.6 142.7 L1077.3 164.8 L1078.5 183.0Z" fill="#2c4e5c"/>
<path d="M1070.8 130.0 L1071.3 123.6 L1071.9 115.7 L1072.5 110.5 L1072.7 107.0 L1073.3 107.0 L1073.5 110.5 L1074.1 115.7 L1074.7 123.6 L1075.2 130.0Z" fill="#4c5a1c"/>
<path d="M1137.8 177.5 L1138.9 158.6 L1140.5 135.7 L1141.9 120.1 L1142.4 110.0 L1143.6 110.0 L1144.1 120.1 L1145.5 135.7 L1147.1 158.6 L1148.2 177.5Z" fill="#7fa109"/>
<path d="M1148.5 183.0 L1149.7 166.2 L1151.4 145.8 L1152.8 132.0 L1153.5 123.0 L1154.5 123.0 L1155.2 132.0 L1156.6 145.8 L1158.3 166.2 L1159.5 183.0Z" fill="#2c4e5c"/>
<path d="M1196.5 177.5 L1198.3 156.9 L1200.7 131.9 L1202.7 115.0 L1201.5 104.0 L1207.5 104.0 L1206.3 115.0 L1208.3 131.9 L1210.7 156.9 L1212.5 177.5Z" fill="#7fa109"/>
<path d="M1201 104h7v6h-7z" fill="#5d6f18"/>
<path d="M1272.4 183.0 L1273.6 163.1 L1275.2 139.0 L1276.5 122.7 L1277.2 112.0 L1278.2 112.0 L1278.9 122.7 L1280.2 139.0 L1281.8 163.1 L1283.0 183.0Z" fill="#2c4e5c"/>
<path d="M1288.4 177.5 L1289.6 152.4 L1291.3 122.0 L1292.8 101.4 L1293.4 88.0 L1294.6 88.0 L1295.2 101.4 L1296.7 122.0 L1298.4 152.4 L1299.6 177.5Z" fill="#7fa109"/>
<path d="M1364.0 177.5 L1365.0 130.0 L1366.0 80.0 L1367.0 47.0 L1374.0 47.0 L1375.5 90.0 L1377.5 140.0 L1380.0 177.5Z" fill="#7c9e09"/>
</g>
<path d="M190 53.5H1787" stroke="rgba(255,255,255,.23)" stroke-width="1" shape-rendering="crispEdges"/>
<path d="M190 120.5H1787" stroke="rgba(255,255,255,.23)" stroke-width="1" shape-rendering="crispEdges"/>
<path d="M190 154.5H1787" stroke="rgba(255,255,255,.23)" stroke-width="1" shape-rendering="crispEdges"/>
<g clip-path="url(#cgpu)">
<path d="M190.0 290.8 L194.0 290.8 L196.0 274.7 L200.3 242.2 L205.0 265.7 L211.5 265.7 L216.0 291.8 L230.0 289.8 L248.0 289.8 L254.0 264.7 L259.0 291.8 L270.0 289.8 L290.0 289.8 L297.4 263.7 L303.0 290.8 L312.0 289.8 L319.0 245.7 L324.0 267.7 L328.6 264.2 L334.0 291.8 L345.0 290.8 L360.0 289.8 L367.7 266.2 L373.0 289.8 L377.0 288.8 L383.0 267.7 L388.0 279.7 L394.0 238.7 L399.0 266.7 L403.0 267.7 L410.0 291.8 L420.0 294.8 L430.0 292.8 L443.0 294.8 L448.0 270.2 L453.0 294.8 L470.0 294.8 L485.0 295.8 L491.0 270.2 L496.0 295.8 L502.0 294.8 L507.0 240.7 L513.0 270.7 L517.0 271.2 L524.0 295.8 L532.0 292.8 L539.0 278.7 L545.0 295.8 L556.0 295.8 L561.0 269.7 L566.0 295.8 L577.0 296.8 L590.0 293.8 L595.0 290.8 L604.3 247.2 L613.0 274.7 L620.6 296.8 L625.0 294.8 L631.0 271.2 L637.0 295.8 L650.0 294.8 L660.0 296.8 L668.0 294.8 L672.0 269.7 L679.0 221.7 L684.5 209.2 L687.0 229.7 L691.0 295.8 L700.0 294.8 L730.0 295.8 L760.0 296.8 L790.0 295.8 L808.0 296.8 L814.4 246.2 L823.0 296.8 L835.0 293.8 L845.0 296.8 L856.0 295.8 L862.8 270.2 L869.0 295.8 L873.7 289.3 L880.0 295.8 L888.0 293.8 L895.3 264.7 L901.0 292.8 L904.0 289.8 L906.0 267.7 L911.0 243.7 L916.6 236.2 L919.0 261.7 L921.7 286.8 L930.0 289.8 L938.0 290.8 L943.0 287.8 L949.0 266.7 L954.0 290.8 L960.0 284.8 L965.0 290.8 L970.4 263.4 L976.0 290.8 L982.0 285.8 L986.0 290.8 L988.0 261.7 L992.0 239.4 L998.0 270.7 L1008.5 248.7 L1013.0 286.8 L1018.0 288.8 L1021.0 269.7 L1024.6 253.7 L1031.0 274.7 L1035.0 254.7 L1042.0 288.8 L1046.0 283.8 L1051.4 231.7 L1056.0 261.7 L1062.0 256.7 L1068.0 286.8 L1075.0 291.8 L1083.0 283.8 L1089.0 262.4 L1095.0 289.8 L1100.0 292.8 L1115.0 291.8 L1121.0 288.8 L1126.8 264.2 L1132.0 292.8 L1140.0 290.8 L1142.5 249.7 L1144.0 242.7 L1149.0 242.7 L1152.0 283.8 L1158.0 285.8 L1163.0 289.8 L1169.7 263.4 L1176.0 290.8 L1185.0 289.8 L1195.0 286.8 L1202.0 264.7 L1208.0 286.8 L1218.0 291.8 L1220.5 259.7 L1224.6 214.7 L1229.0 267.7 L1236.0 290.8 L1243.0 285.8 L1246.0 290.8 L1250.6 266.7 L1256.0 292.8 L1265.0 289.8 L1275.0 291.8 L1282.9 268.7 L1288.0 292.8 L1296.0 290.8 L1304.0 288.8 L1310.3 214.7 L1317.0 288.8 L1322.0 294.8 L1330.0 291.8 L1336.7 267.5 L1342.0 294.8 L1352.0 294.8 L1359.0 295.8 L1364.0 271.0 L1369.0 294.8 L1374.0 294.8 L1380.3 220.7 L1387.0 277.7 L1390.0 294.8 L1400.0 294.8 L1407.0 295.8 L1412.3 271.0 L1417.0 295.8 L1424.0 292.8 L1430.0 279.7 L1433.5 274.2 L1439.0 295.8 L1440.5 269.7 L1444.4 227.7 L1448.0 269.7 L1450.0 295.8 L1455.4 280.7 L1460.0 294.8 L1465.0 296.8 L1480.0 295.8 L1493.0 294.8 L1498.7 247.7 L1504.0 279.7 L1509.0 295.8 L1520.0 294.8 L1560.0 296.3 L1600.0 295.8 L1628.0 296.3 L1630.0 261.7 L1633.0 243.2 L1638.0 265.7 L1644.0 239.7 L1649.0 205.2 L1655.0 261.7 L1660.0 271.7 L1665.0 283.7 L1671.0 278.2 L1676.5 291.3 L1679.0 239.7 L1682.0 210.7 L1692.0 210.7 L1695.0 234.7 L1698.4 262.7 L1702.0 240.7 L1704.6 239.7 L1708.0 243.7 L1713.6 273.7 L1715.0 269.7 L1717.0 224.7 L1719.0 192.7 L1721.0 239.7 L1724.0 295.8 L1740.0 295.8 L1760.0 296.8 L1777.6 296.3 L1781.0 288.8 L1784.0 281.7 L1784.0 319 L190.0 319 Z" fill="#d97b10"/>
<path d="M190.0 294.4 L194.0 294.4 L196.0 275.9 L200.3 243.4 L205.0 266.9 L211.5 266.9 L216.0 295.4 L230.0 293.4 L248.0 293.4 L254.0 265.9 L259.0 295.4 L270.0 293.4 L290.0 293.4 L297.4 264.9 L303.0 294.4 L312.0 293.4 L319.0 246.9 L324.0 268.9 L328.6 265.4 L334.0 295.4 L345.0 294.4 L360.0 293.4 L367.7 267.4 L373.0 293.4 L377.0 292.4 L383.0 268.9 L388.0 280.9 L394.0 239.9 L399.0 267.9 L403.0 268.9 L410.0 295.4 L420.0 298.4 L430.0 296.4 L443.0 298.4 L448.0 271.4 L453.0 298.4 L470.0 298.4 L485.0 299.4 L491.0 271.4 L496.0 299.4 L502.0 298.4 L507.0 241.9 L513.0 271.9 L517.0 272.4 L524.0 299.4 L532.0 296.4 L539.0 279.9 L545.0 299.4 L556.0 299.4 L561.0 270.9 L566.0 299.4 L577.0 300.4 L590.0 297.4 L595.0 294.4 L604.3 248.4 L613.0 275.9 L620.6 300.4 L625.0 298.4 L631.0 272.4 L637.0 299.4 L650.0 298.4 L660.0 300.4 L668.0 298.4 L672.0 270.9 L679.0 222.9 L684.5 210.4 L687.0 230.9 L691.0 299.4 L700.0 298.4 L730.0 299.4 L760.0 300.4 L790.0 299.4 L808.0 300.4 L814.4 247.4 L823.0 300.4 L835.0 297.4 L845.0 300.4 L856.0 299.4 L862.8 271.4 L869.0 299.4 L873.7 292.9 L880.0 299.4 L888.0 297.4 L895.3 265.9 L901.0 296.4 L904.0 293.4 L906.0 268.9 L911.0 244.9 L916.6 237.4 L919.0 262.9 L921.7 290.4 L930.0 293.4 L938.0 294.4 L943.0 291.4 L949.0 267.9 L954.0 294.4 L960.0 288.4 L965.0 294.4 L970.4 264.6 L976.0 294.4 L982.0 289.4 L986.0 294.4 L988.0 262.9 L992.0 240.6 L998.0 271.9 L1008.5 249.9 L1013.0 290.4 L1018.0 292.4 L1021.0 270.9 L1024.6 254.9 L1031.0 275.9 L1035.0 255.9 L1042.0 292.4 L1046.0 287.4 L1051.4 232.9 L1056.0 262.9 L1062.0 257.9 L1068.0 292.0 L1075.0 297.0 L1083.0 289.0 L1089.0 263.6 L1095.0 295.0 L1100.0 298.0 L1115.0 297.0 L1121.0 294.0 L1126.8 265.4 L1132.0 298.0 L1140.0 296.0 L1142.5 250.9 L1144.0 243.9 L1149.0 243.9 L1152.0 289.0 L1158.0 291.0 L1163.0 295.0 L1169.7 264.6 L1176.0 296.0 L1185.0 295.0 L1195.0 292.0 L1202.0 265.9 L1208.0 292.0 L1218.0 297.0 L1220.5 260.9 L1224.6 215.9 L1229.0 268.9 L1236.0 294.4 L1243.0 289.4 L1246.0 294.4 L1250.6 267.9 L1256.0 296.4 L1265.0 293.4 L1275.0 295.4 L1282.9 269.9 L1288.0 296.4 L1296.0 294.4 L1304.0 292.4 L1310.3 215.9 L1317.0 292.4 L1322.0 298.4 L1330.0 295.4 L1336.7 268.7 L1342.0 298.4 L1352.0 298.4 L1359.0 299.4 L1364.0 272.2 L1369.0 298.4 L1374.0 298.4 L1380.3 221.9 L1387.0 278.9 L1390.0 298.4 L1400.0 298.4 L1407.0 299.4 L1412.3 272.2 L1417.0 299.4 L1424.0 296.4 L1430.0 280.9 L1433.5 275.4 L1439.0 299.4 L1440.5 270.9 L1444.4 228.9 L1448.0 270.9 L1450.0 299.4 L1455.4 281.9 L1460.0 298.4 L1465.0 300.4 L1480.0 299.4 L1493.0 298.4 L1498.7 248.9 L1504.0 280.9 L1509.0 299.4 L1520.0 298.4 L1560.0 299.9 L1600.0 299.4 L1628.0 299.9 L1630.0 262.9 L1633.0 244.4 L1638.0 266.9 L1644.0 240.9 L1649.0 206.4 L1655.0 262.9 L1660.0 272.9 L1665.0 284.9 L1671.0 279.4 L1676.5 294.9 L1679.0 240.9 L1682.0 211.9 L1692.0 211.9 L1695.0 235.9 L1698.4 263.9 L1702.0 241.9 L1704.6 240.9 L1708.0 244.9 L1713.6 274.9 L1715.0 270.9 L1717.0 225.9 L1719.0 193.9 L1721.0 240.9 L1724.0 299.4 L1740.0 299.4 L1760.0 300.4 L1777.6 299.9 L1781.0 292.4 L1784.0 282.9 L1784.0 319 L190.0 319 Z" fill="#634a87"/>
<path d="M190 292l4 0 0 5-4 0z" fill="#d97b10"/>
<path d="M1021.0 270.0 L1024.6 254.0 L1031.0 275.0 L1035.0 255.0 L1040.0 283.0 L1030.0 292.0 L1024.0 276.0 L1021.0 284.0Z" fill="#d97b10"/>
<path d="M998.0 271.0 L1008.5 249.0 L1010.0 262.0 L1001.0 280.0Z" fill="#d97b10"/>
<path d="M1056.0 262.0 L1062.0 257.0 L1065.0 272.0 L1058.0 270.0Z" fill="#d97b10"/>
<path d="M1068.0 288.0 L1075.0 293.0 L1083.0 285.0 L1083.0 289.0 L1075.0 298.0 L1067.0 293.0Z" fill="#d97b10"/>
<path d="M1095.0 291.0 L1121.0 290.0 L1121.0 295.0 L1095.0 297.0Z" fill="#d97b10"/>
<path d="M1152.0 285.0 L1163.0 291.0 L1163.0 296.0 L1152.0 291.0Z" fill="#d97b10"/>
</g>
<path d="M190 234.5H1787" stroke="rgba(255,255,255,.22)" stroke-width="1" shape-rendering="crispEdges"/>
<path d="M190 276.5H1787" stroke="rgba(255,255,255,.22)" stroke-width="1" shape-rendering="crispEdges"/>
<g clip-path="url(#cren)" fill="none" stroke-width="1.15" stroke-linejoin="round">
<path d="M186.0 358.4 L188.7 359.7 L236.9 359.7 L240.3 361.4 L259.0 361.4 L262.4 359.7 L289.6 359.7 L299.8 362.4 L321.8 362.4 L326.9 364.1 L359.2 364.1 L363.2 361.1 L369.4 361.1 L374.5 363.1 L381.2 363.5 L386.3 365.8 L403.3 365.5 L410.1 366.9 L420.3 367.5 L430.5 367.9 L437.3 367.2 L457.6 366.9 L467.8 367.9 L481.4 369.2 L503.5 369.6 L510.3 365.2 L520.5 364.1 L799.9 364.1 L865.2 363.9 L870.3 365.3 L877.2 363.9 L902.9 363.9 L908.0 361.8 L918.3 360.8 L925.2 354.3 L956.0 354.0 L962.9 349.8 L968.0 349.1 L973.2 341.3 L998.9 339.5 L1005.8 336.5 L1014.3 333.7 L1022.9 333.0 L1033.2 331.7 L1040.1 334.4 L1046.9 337.1 L1057.2 341.3 L1070.9 343.3 L1091.5 344.0 L1098.4 346.7 L1108.6 348.1 L1118.9 351.6 L1129.2 350.2 L1142.9 353.3 L1149.8 353.3 L1156.7 345.7 L1163.5 342.3 L1170.4 341.6 L1197.8 341.6 L1201.2 343.3 L1211.5 341.3 L1242.4 341.6 L1249.2 343.3 L1263.0 344.0 L1275.0 344.7 L1287.0 350.2 L1293.8 350.9 L1300.7 354.3 L1335.0 354.3 L1348.7 355.3 L1362.4 355.7 L1367.6 357.7 L1368.8 357.9 L1375.9 362.7 L1384.3 365.0 L1786.9 365.0" stroke="#3d7f9b"/>
<path d="M186.0 375.3 L233.5 375.0 L321.8 373.7 L349.0 374.0 L369.4 373.3 L376.2 376.4 L386.3 377.0 L391.4 381.1 L403.3 381.8 L408.4 380.4 L423.7 379.8 L464.4 379.4 L472.9 382.1 L491.6 383.5 L512.0 383.8 L520.5 386.9 L529.0 391.3 L583.3 391.6 L593.5 393.7 L607.1 395.0 L617.2 394.0 L629.1 392.0 L634.2 387.9 L641.0 388.9 L649.5 388.6 L661.4 395.4 L665.8 393.7 L671.6 397.8 L676.7 395.4 L681.8 394.4 L799.9 394.4 L865.2 394.4 L872.0 396.8 L902.9 395.4 L908.0 390.3 L918.3 387.6 L925.2 379.0 L956.0 378.3 L962.9 374.2 L968.0 373.2 L974.9 368.0 L992.0 366.0 L1005.8 363.9 L1009.9 345.7 L1033.2 342.6 L1040.1 341.3 L1060.6 341.3 L1074.3 343.3 L1091.5 344.0 L1108.6 347.4 L1129.2 350.2 L1142.9 352.9 L1149.8 353.3 L1158.4 344.0 L1166.9 341.6 L1197.8 341.9 L1201.2 343.3 L1211.5 341.3 L1232.1 341.6 L1245.8 345.7 L1273.3 347.4 L1287.0 354.3 L1295.5 361.8 L1300.7 364.6 L1321.3 369.7 L1338.4 374.9 L1362.4 377.6 L1369.3 380.0 L1370.2 380.4 L1373.6 388.8 L1381.5 394.5 L1395.5 395.9 L1786.9 395.9" stroke="#6d6616"/>
<path d="M186.0 383.8 L220.0 384.5 L287.9 383.8 L362.6 384.5 L369.4 385.9 L376.2 389.6 L386.3 390.6 L391.4 397.8 L403.3 398.8 L410.1 398.1 L464.4 398.1 L472.9 399.5 L491.6 399.8 L512.0 400.5 L520.5 402.5 L529.0 404.9 L583.3 405.2 L593.5 406.6 L603.7 407.6 L613.8 407.6 L627.4 406.2 L634.2 404.2 L641.0 404.9 L649.5 404.6 L661.4 407.6 L666.5 407.6 L671.6 409.3 L676.7 408.3 L681.8 407.9 L799.9 407.9 L865.2 408.1 L872.0 409.8 L892.6 408.8 L901.2 407.1 L909.7 400.6 L918.3 397.8 L925.2 389.6 L956.0 387.9 L962.9 380.7 L968.0 374.9 L974.9 368.0 L992.0 365.6 L1005.8 362.2 L1010.2 336.5 L1016.0 335.4 L1022.2 339.9 L1033.2 328.6 L1046.9 326.2 L1058.9 326.2 L1070.9 329.6 L1088.1 332.0 L1098.4 337.8 L1125.8 344.7 L1134.4 350.2 L1142.9 351.9 L1150.5 352.9 L1156.7 338.9 L1161.8 332.3 L1170.4 329.9 L1208.1 329.6 L1210.5 330.6 L1216.7 327.9 L1228.7 328.2 L1237.2 334.4 L1256.1 340.6 L1275.0 344.7 L1281.8 350.9 L1287.0 357.7 L1297.3 371.4 L1302.4 374.9 L1314.4 376.6 L1321.3 378.3 L1338.4 382.8 L1362.4 384.5 L1369.3 386.9 L1370.2 379.0 L1374.5 393.6 L1381.5 400.1 L1387.1 401.5 L1786.9 401.5" stroke="#6f9319"/>
<path d="M186.0 386.9 L220.0 387.9 L287.9 386.9 L359.2 387.9 L369.4 388.9 L376.2 392.7 L386.3 393.3 L391.4 399.8 L403.3 400.5 L410.1 399.5 L464.4 400.1 L472.9 401.8 L491.6 402.5 L512.0 403.5 L520.5 405.6 L529.0 408.3 L583.3 408.6 L593.5 409.6 L607.1 410.3 L617.2 410.0 L629.1 409.0 L634.2 406.9 L641.0 407.6 L649.5 407.3 L661.4 410.3 L666.5 410.3 L671.6 412.4 L676.7 411.3 L681.8 410.7 L799.9 410.7 L865.2 410.9 L872.0 412.2 L892.6 411.2 L902.9 409.8 L909.7 404.0 L918.3 400.9 L925.2 392.0 L956.0 390.6 L962.9 382.4 L968.0 379.0 L978.3 373.8 L992.0 372.5 L1005.8 370.4 L1010.2 346.7 L1016.0 344.7 L1022.2 348.5 L1033.2 338.9 L1046.9 336.5 L1058.9 336.5 L1067.5 340.6 L1088.1 342.3 L1098.4 347.4 L1125.8 354.3 L1134.4 358.8 L1142.9 360.5 L1150.5 360.5 L1156.7 347.4 L1161.8 341.6 L1170.4 339.5 L1208.1 339.5 L1211.5 340.6 L1216.7 338.9 L1228.7 339.2 L1239.0 344.7 L1259.5 349.1 L1275.0 352.6 L1281.8 359.4 L1287.0 365.3 L1293.8 371.4 L1302.4 380.0 L1314.4 381.7 L1328.1 385.2 L1341.8 388.6 L1362.4 389.6 L1369.3 393.7 L1370.2 383.2 L1374.5 398.1 L1381.5 404.3 L1388.5 405.7 L1786.9 405.7" stroke="#c9741a"/>
</g>
<g clip-path="url(#cmem)" fill="none" stroke-linejoin="round">
<path d="M187 456.6H1369L1372 457.6H1788" stroke="#6f9319" stroke-width="1.3"/>
<path d="M187 461.8H1788" stroke="#3d7f9b" stroke-width="1.3"/>
<path d="M187 471.8H1788" stroke="#6d6616" stroke-width="1"/>
<path d="M187.0 473.5 L195.0 472.0 L200.0 473.0 L215.0 472.5 L225.0 474.0 L240.0 473.0 L250.0 472.5 L275.0 472.5 L285.0 473.5 L310.0 472.0 L318.0 470.5 L325.0 471.5 L335.0 470.5 L345.0 471.0 L355.0 473.0 L380.0 472.5 L387.0 468.5 L395.0 467.5 L412.0 467.5 L420.0 469.0 L440.0 470.5 L448.0 469.0 L470.0 469.0 L480.0 470.0 L492.0 469.0 L500.0 467.5 L505.0 468.5 L515.0 467.5 L525.0 468.0 L535.0 469.5 L560.0 470.0 L575.0 469.5 L590.0 470.0 L600.0 468.0 L612.0 467.5 L622.0 468.5 L630.0 470.5 L640.0 469.5 L655.0 469.5 L672.0 469.0 L680.0 467.5 L690.0 468.0 L700.0 470.0 L750.0 470.0 L790.0 470.0 L800.0 470.0 L812.0 468.0 L830.0 468.5 L845.0 470.0 L860.0 469.5 L880.0 470.0 L905.0 469.0 L915.0 467.5 L930.0 467.5 L940.0 469.0 L960.0 470.0 L985.0 468.0 L995.0 469.5 L1010.0 469.0 L1040.0 470.0 L1048.0 467.5 L1058.0 468.5 L1070.0 470.5 L1085.0 470.0 L1110.0 469.5 L1125.0 470.0 L1140.0 467.5 L1158.0 468.5 L1165.0 470.5 L1180.0 469.0 L1200.0 469.5 L1215.0 470.5 L1222.0 467.5 L1240.0 468.0 L1250.0 469.0 L1275.0 470.0 L1290.0 469.5 L1300.0 470.5 L1308.0 467.5 L1322.0 467.5 L1335.0 470.0 L1369.0 470.5 L1420.0 471.0 L1490.0 471.0 L1496.0 468.5 L1520.0 468.5 L1528.0 471.0 L1625.0 471.0 L1632.0 468.5 L1650.0 468.5 L1658.0 471.0 L1695.0 471.0 L1702.0 468.5 L1718.0 468.5 L1724.0 471.0 L1788.0 471.0" stroke="#c9741a" stroke-width="1.3"/>
<path d="M187 476.3H1788" stroke="#b08a1a" stroke-width="1.3"/>
<path d="M187.0 497.6 L800.0 486.5 L1016.0 480.0 L1022.0 507.6 L1080.0 507.4 L1369.0 501.8 L1420.0 501.5 L1600.0 497.0 L1788.0 493.5" stroke="#8a3018" stroke-width="1.1"/>
<path d="M1144.2 542L1145.2 536L1146.2 536L1147.2 542" stroke="#4d3a78" stroke-width="1"/>
<path d="M1219.5 542L1220.5 535L1221.5 535L1222.5 542" stroke="#4d3a78" stroke-width="1"/>
<path d="M1305.5 542L1307.0 535L1308.0 535L1309.5 542" stroke="#4d3a78" stroke-width="1"/>
<path d="M1438 542L1441.5 492.8L1442.5 492.8L1446 542" stroke="#4d3a78" stroke-width="1"/>
<path d="M1642.5 542L1646.5 485.8L1647.5 485.8L1651.5 542" stroke="#4d3a78" stroke-width="1"/>
<path d="M1713.7 542L1716.2 529L1717.2 529L1719.7 542" stroke="#4d3a78" stroke-width="1"/>
<path d="M1374.5 542L1375.5 538L1376.5 538L1377.5 542" stroke="#4d3a78" stroke-width="1"/>
<path d="M1672 539.500h14" stroke="#4d3a78" stroke-width="1"/>
</g>
<rect x="1367" y="47" width="5" height="141" fill="rgba(235,240,225,.80)"/>
<rect x="1367" y="189" width="5" height="130" fill="rgba(225,225,225,.80)"/>
<rect x="1367" y="320" width="5" height="129" fill="rgba(225,225,225,.80)"/>
<rect x="1367" y="450" width="5" height="91" fill="rgba(225,225,225,.80)"/>
</svg>
<div class="abs" style="left:0;top:39px;width:1780px;height:494px;overflow:hidden"><div style="position:absolute;left:0;top:-39px;width:1780px;height:600px">
<div class="abs" style="left:184.3px;top:37.7px;width:80.1921875px;height:11.6px;border-radius:5.8px;background:rgba(0,0,0,.88)"></div>
<div class="t" style="left:187.7px;top:35.5px;font-size:10.4px;letter-spacing:0.48px;line-height:16px;color:#eee;">66ms (15FPS)</div>
<div class="abs" style="left:184.3px;top:105.2px;width:80.1921875px;height:11.6px;border-radius:5.8px;background:rgba(0,0,0,.88)"></div>
<div class="t" style="left:187.7px;top:103.0px;font-size:10.4px;letter-spacing:0.48px;line-height:16px;color:#eee;">33ms (30FPS)</div>
<div class="abs" style="left:184.3px;top:138.2px;width:80.1921875px;height:11.6px;border-radius:5.8px;background:rgba(0,0,0,.88)"></div>
<div class="t" style="left:187.7px;top:136.0px;font-size:10.4px;letter-spacing:0.48px;line-height:16px;color:#eee;">16ms (60FPS)</div>
<div class="abs" style="left:184.3px;top:219.2px;width:80.1921875px;height:11.6px;border-radius:5.8px;background:rgba(0,0,0,.88)"></div>
<div class="t" style="left:187.7px;top:217.0px;font-size:10.4px;letter-spacing:0.48px;line-height:16px;color:#eee;">33ms (30FPS)</div>
<div class="abs" style="left:184.3px;top:261.2px;width:80.1921875px;height:11.6px;border-radius:5.8px;background:rgba(0,0,0,.88)"></div>
<div class="t" style="left:187.7px;top:259.0px;font-size:10.4px;letter-spacing:0.48px;line-height:16px;color:#eee;">16ms (60FPS)</div>
<div class="abs" style="left:1362px;top:75.5px;width:51.4791015625px;height:11.6px;border-radius:5.8px;background:rgba(0,0,0,.88)"></div>
<div class="t" style="left:1365.4px;top:73.3px;font-size:10.4px;letter-spacing:0.60px;line-height:16px;color:#aebf62;">84.60ms</div>
<div class="abs" style="left:1315.883203125px;top:143.7px;width:45.116796875px;height:11.6px;border-radius:5.8px;background:rgba(0,0,0,.88)"></div>
<div class="t" style="left:1319.3px;top:141.5px;font-size:10.4px;letter-spacing:0.60px;line-height:16px;color:#8fb5cf;">0.00ms</div>
<div class="abs" style="left:1315.883203125px;top:155.79999999999998px;width:45.116796875px;height:11.6px;border-radius:5.8px;background:rgba(0,0,0,.88)"></div>
<div class="t" style="left:1319.3px;top:153.6px;font-size:10.4px;letter-spacing:0.60px;line-height:16px;color:#cdb66c;">0.00ms</div>
<div class="abs" style="left:1315.883203125px;top:168.2px;width:45.116796875px;height:11.6px;border-radius:5.8px;background:rgba(0,0,0,.88)"></div>
<div class="t" style="left:1319.3px;top:166.0px;font-size:10.4px;letter-spacing:0.60px;line-height:16px;color:#b9b27e;">0.00ms</div>
<div class="abs" style="left:1362px;top:155.79999999999998px;width:45.116796875px;height:11.6px;border-radius:5.8px;background:rgba(0,0,0,.88)"></div>
<div class="t" style="left:1365.4px;top:153.6px;font-size:10.4px;letter-spacing:0.60px;line-height:16px;color:#d3a56a;">0.00ms</div>
<div class="abs" style="left:1362px;top:168.2px;width:45.116796875px;height:11.6px;border-radius:5.8px;background:rgba(0,0,0,.88)"></div>
<div class="t" style="left:1365.4px;top:166.0px;font-size:10.4px;letter-spacing:0.60px;line-height:16px;color:#a99cc0;">0.00ms</div>
<div class="abs" style="left:1315.883203125px;top:293.7px;width:45.116796875px;height:11.6px;border-radius:5.8px;background:rgba(0,0,0,.88)"></div>
<div class="t" style="left:1319.3px;top:291.5px;font-size:10.4px;letter-spacing:0.60px;line-height:16px;color:#a99cc0;">8.87ms</div>
<div class="abs" style="left:1362px;top:281.0px;width:45.116796875px;height:11.6px;border-radius:5.8px;background:rgba(0,0,0,.88)"></div>
<div class="t" style="left:1365.4px;top:278.8px;font-size:10.4px;letter-spacing:0.60px;line-height:16px;color:#e3b572;">1.50ms</div>
<div class="abs" style="left:1362px;top:344.2px;width:26.9869140625px;height:11.6px;border-radius:5.8px;background:rgba(0,0,0,.88)"></div>
<div class="t" style="left:1365.4px;top:342.0px;font-size:10.4px;letter-spacing:0.74px;line-height:16px;color:#8fc0de;">118</div>
<div class="abs" style="left:1328.56875px;top:369.2px;width:32.43125px;height:11.6px;border-radius:5.8px;background:rgba(0,0,0,.88)"></div>
<div class="t" style="left:1332.0px;top:367.0px;font-size:10.4px;letter-spacing:0.48px;line-height:16px;color:#c9c47e;">2.1M</div>
<div class="abs" style="left:1362px;top:377.2px;width:29.5943359375px;height:11.6px;border-radius:5.8px;background:rgba(0,0,0,.88)"></div>
<div class="t" style="left:1365.4px;top:375.0px;font-size:10.4px;letter-spacing:0.63px;line-height:16px;color:#b9cf6a;">2.4k</div>
<div class="abs" style="left:1328.56875px;top:381.2px;width:32.43125px;height:11.6px;border-radius:5.8px;background:rgba(0,0,0,.88)"></div>
<div class="t" style="left:1332.0px;top:379.0px;font-size:10.4px;letter-spacing:0.48px;line-height:16px;color:#e3b572;">1.3M</div>
<div class="abs" style="left:1313.0462890625px;top:442.2px;width:47.9537109375px;height:11.6px;border-radius:5.8px;background:rgba(0,0,0,.88)"></div>
<div class="t" style="left:1316.4px;top:440.0px;font-size:10.4px;letter-spacing:0.34px;line-height:16px;color:#b9cf6a;">2.55 GB</div>
<div class="abs" style="left:1362px;top:447.2px;width:55.194921875px;height:11.6px;border-radius:5.8px;background:rgba(0,0,0,.88)"></div>
<div class="t" style="left:1365.4px;top:445.0px;font-size:10.4px;letter-spacing:0.41px;line-height:16px;color:#8fc0de;">434.6 MB</div>
<div class="abs" style="left:1312.1673828125px;top:459.2px;width:48.8326171875px;height:11.6px;border-radius:5.8px;background:rgba(0,0,0,.88)"></div>
<div class="t" style="left:1315.6px;top:457.0px;font-size:10.4px;letter-spacing:0.39px;line-height:16px;color:#e3b572;">30.6 MB</div>
<div class="abs" style="left:1362px;top:459.2px;width:26.9869140625px;height:11.6px;border-radius:5.8px;background:rgba(0,0,0,.88)"></div>
<div class="t" style="left:1365.4px;top:457.0px;font-size:10.4px;letter-spacing:0.74px;line-height:16px;color:#c9c47e;">288</div>
<div class="abs" style="left:1318.6810546875px;top:471.2px;width:42.3189453125px;height:11.6px;border-radius:5.8px;background:rgba(0,0,0,.88)"></div>
<div class="t" style="left:1322.1px;top:469.0px;font-size:10.4px;letter-spacing:0.62px;line-height:16px;color:#dcc66c;">107.3k</div>
<div class="abs" style="left:1362px;top:488.2px;width:48.8326171875px;height:11.6px;border-radius:5.8px;background:rgba(0,0,0,.88)"></div>
<div class="t" style="left:1365.4px;top:486.0px;font-size:10.4px;letter-spacing:0.39px;line-height:16px;color:#d58a6a;">42.4 MB</div>
<div class="t" style="left:1625.0px;top:42.8px;font-size:11.4px;letter-spacing:0.92px;line-height:16px;font-weight:bold;color:#f2f2f2;text-shadow:0 1px 0 #000,1px 0 0 #000,-1px 0 0 #000,0 -1px 0 #000;">Selected: SceneCulling</div>
</div></div>
<div class="abs" style="left:1780px;top:39px;width:15px;height:494px;background:linear-gradient(90deg,#8a8a8a,#b4b4b4 14%,#c6c6c6 50%,#aeaeae 85%,#8e8e8e)"></div>
<div class="abs" style="left:1781.5px;top:55px;width:12.5px;height:459px;border-radius:6.2px;background:linear-gradient(90deg,#a6a6a6,#c6c6c6 35%,#c0c0c0 70%,#a6a6a6)"></div>
<div class="abs" style="left:1781.2px;top:57px;width:12.6px;height:138px;border-radius:6.3px;background:linear-gradient(90deg,#56627f,#8490a8 16%,#77849e 45%,#566280 85%,#46526e);border:1px solid #3c4864"></div>
<svg style="left:1783px;top:44.3px" width="9" height="6" viewBox="0 0 9 6"><path d="M4.500 .5L8.500 5.500H.5z" fill="#333"/></svg>
<svg style="left:1783px;top:521px" width="9" height="6" viewBox="0 0 9 6"><path d="M4.500 5.500L8.500 .5H.5z" fill="#333"/></svg>
<div class="abs" style="left:0px;top:533px;width:1795px;height:18px;background:linear-gradient(#cbcbcb,#b9b9b9 35%,#a1a1a1 92%,#8a8a8a);border-top:1px solid #d6d6d6;border-bottom:1px solid #6e6e6e"></div>
<div class="t" style="left:5.0px;top:534.3px;font-size:10.6px;letter-spacing:0.41px;line-height:16px;">Hierarchy</div>
<svg style="left:196px;top:541px" width="5" height="3" viewBox="0 0 5 3"><path d="M0 0h5l-2.5 3z" fill="#2a2a2a"/></svg>
<div class="abs" style="left:204px;top:534px;width:1px;height:16px;background:#7b7b7b"></div>
<div class="abs" style="left:205px;top:534px;width:1px;height:16px;background:rgba(255,255,255,.28)"></div>
<div class="t" style="left:704.8px;top:536.2px;font-size:10.2px;letter-spacing:0.76px;line-height:16px;">CPU:105.99ms   GPU:10.37ms</div>
<div class="abs" style="left:1369px;top:535.5px;width:300px;height:13px;border-radius:6.5px;background:linear-gradient(#9c9c9c,#b2b2b2 40%,#b8b8b8);border:1px solid #606060;box-shadow:0 1px 0 rgba(255,255,255,.3)"></div>
<svg style="left:1373px;top:537px" width="10" height="10" viewBox="0 0 10 10"><circle cx="4" cy="4" r="2.6" fill="none" stroke="#3a3a3a" stroke-width="1"/><path d="M6 6l2.800 2.800" stroke="#3a3a3a" stroke-width="1.200"/></svg>
<div class="abs" style="left:1669px;top:534px;width:1px;height:16px;background:#7b7b7b"></div>
<div class="abs" style="left:1670px;top:534px;width:1px;height:16px;background:rgba(255,255,255,.28)"></div>
<div class="abs" style="left:1789px;top:534px;width:1px;height:16px;background:#7b7b7b"></div>
<div class="abs" style="left:1790px;top:534px;width:1px;height:16px;background:rgba(255,255,255,.28)"></div>
<div class="t" style="left:1675.0px;top:534.3px;font-size:10.6px;letter-spacing:0.30px;line-height:16px;">No Details</div>
<svg style="left:1780.5px;top:541px" width="5" height="3" viewBox="0 0 5 3"><path d="M0 0h5l-2.5 3z" fill="#2a2a2a"/></svg>
<div class="abs" style="left:0px;top:551px;width:1795px;height:25px;background:linear-gradient(#b9b9b9,#b3b3b3 60%,#adadad);border-bottom:1px solid #777"></div>
<div class="t" style="left:3.1px;top:558.2px;font-size:11.6px;letter-spacing:0.91px;line-height:16px;color:#222;">Overview</div>
<div class="abs" style="left:1274px;top:555px;width:1px;height:18px;background:#8a8a8a"></div>
<div class="abs" style="left:1275px;top:555px;width:1px;height:18px;background:rgba(255,255,255,.25)"></div>
<div class="t" style="left:1278.8px;top:558.2px;font-size:11.6px;letter-spacing:0.71px;line-height:16px;color:#222;">Total</div>
<div class="abs" style="left:1354px;top:555px;width:1px;height:18px;background:#8a8a8a"></div>
<div class="abs" style="left:1355px;top:555px;width:1px;height:18px;background:rgba(255,255,255,.25)"></div>
<div class="t" style="left:1358.8px;top:558.2px;font-size:11.6px;letter-spacing:0.57px;line-height:16px;color:#222;">Self</div>
<div class="abs" style="left:1434px;top:555px;width:1px;height:18px;background:#8a8a8a"></div>
<div class="abs" style="left:1435px;top:555px;width:1px;height:18px;background:rgba(255,255,255,.25)"></div>
<div class="t" style="left:1438.8px;top:558.2px;font-size:11.6px;letter-spacing:0.51px;line-height:16px;color:#222;">Calls</div>
<div class="abs" style="left:1514px;top:555px;width:1px;height:18px;background:#8a8a8a"></div>
<div class="abs" style="left:1515px;top:555px;width:1px;height:18px;background:rgba(255,255,255,.25)"></div>
<div class="t" style="left:1518.8px;top:558.2px;font-size:11.6px;letter-spacing:0.35px;line-height:16px;color:#222;">GC Alloc</div>
<div class="abs" style="left:1594px;top:555px;width:1px;height:18px;background:#8a8a8a"></div>
<div class="abs" style="left:1595px;top:555px;width:1px;height:18px;background:rgba(255,255,255,.25)"></div>
<div class="t" style="left:1598.8px;top:558.2px;font-size:11.6px;letter-spacing:0.73px;line-height:16px;color:#222;">Time ms</div>
<div class="abs" style="left:1674px;top:555px;width:1px;height:18px;background:#8a8a8a"></div>
<div class="abs" style="left:1675px;top:555px;width:1px;height:18px;background:rgba(255,255,255,.25)"></div>
<div class="t" style="left:1678.8px;top:558.2px;font-size:11.6px;letter-spacing:0.55px;line-height:16px;color:#222;">Self ms</div>
<div class="abs" style="left:1754px;top:555px;width:1px;height:18px;background:#8a8a8a"></div>
<div class="abs" style="left:1755px;top:555px;width:1px;height:18px;background:rgba(255,255,255,.25)"></div>
<div class="abs" style="left:1779px;top:555px;width:1px;height:18px;background:#8a8a8a"></div>
<div class="abs" style="left:1780px;top:555px;width:1px;height:18px;background:rgba(255,255,255,.25)"></div>
<svg style="left:1662px;top:557px" width="4" height="3" viewBox="0 0 4 3"><path d="M0 0h4l-2.0 3z" fill="#222"/></svg>
<svg style="left:1759px;top:557px" width="15" height="15" viewBox="0 0 15 15"><path d="M7.300 1.800L13.300 13.600H1.300z" fill="rgba(200,200,200,.5)" stroke="#4c4c4c" stroke-width="1.200" stroke-linejoin="round"/><path d="M7.300 5.500v4.800M7.300 11.300v1" stroke="#dedede" stroke-width="1.100"/></svg>
<div class="abs" style="left:0px;top:576px;width:1780px;height:451px;background:#9f9f9f"></div>
<div class="t" style="left:17.0px;top:576.6px;font-size:11.6px;letter-spacing:0.54px;line-height:16px;color:#0c0c0c;">RenderPipelineManager.DoRenderLoop_Internal()</div>
<div class="t" style="left:1279.8px;top:576.6px;font-size:11.6px;letter-spacing:0.51px;line-height:16px;color:#0c0c0c;">82.6%</div>
<div class="t" style="left:1359.8px;top:576.6px;font-size:11.6px;letter-spacing:0.47px;line-height:16px;color:#0c0c0c;">0.0%</div>
<div class="t" style="left:1439.8px;top:576.6px;font-size:11.6px;letter-spacing:1.64px;line-height:16px;color:#0c0c0c;">2</div>
<div class="t" style="left:1519.8px;top:576.6px;font-size:11.6px;letter-spacing:0.27px;line-height:16px;color:#0c0c0c;">1.2 KB</div>
<div class="t" style="left:1599.8px;top:576.6px;font-size:11.6px;letter-spacing:0.67px;line-height:16px;color:#0c0c0c;">87.59</div>
<div class="t" style="left:1679.8px;top:576.6px;font-size:11.6px;letter-spacing:0.68px;line-height:16px;color:#0c0c0c;">0.00</div>
<div class="t" style="left:31.0px;top:592.6px;font-size:11.6px;letter-spacing:0.54px;line-height:16px;color:#0c0c0c;">RenderPipelineManager.DoRenderLoop_Internal()</div>
<div class="t" style="left:1279.8px;top:592.6px;font-size:11.6px;letter-spacing:0.51px;line-height:16px;color:#0c0c0c;">82.6%</div>
<div class="t" style="left:1359.8px;top:592.6px;font-size:11.6px;letter-spacing:0.47px;line-height:16px;color:#0c0c0c;">0.0%</div>
<div class="t" style="left:1439.8px;top:592.6px;font-size:11.6px;letter-spacing:1.64px;line-height:16px;color:#0c0c0c;">2</div>
<div class="t" style="left:1519.8px;top:592.6px;font-size:11.6px;letter-spacing:0.27px;line-height:16px;color:#0c0c0c;">1.2 KB</div>
<div class="t" style="left:1599.8px;top:592.6px;font-size:11.6px;letter-spacing:0.67px;line-height:16px;color:#0c0c0c;">87.59</div>
<div class="t" style="left:1679.8px;top:592.6px;font-size:11.6px;letter-spacing:0.68px;line-height:16px;color:#0c0c0c;">0.00</div>
<div class="t" style="left:45.0px;top:608.6px;font-size:11.6px;letter-spacing:0.50px;line-height:16px;color:#0c0c0c;">LightweightPipeline.Render()</div>
<div class="t" style="left:1279.8px;top:608.6px;font-size:11.6px;letter-spacing:0.51px;line-height:16px;color:#0c0c0c;">82.6%</div>
<div class="t" style="left:1359.8px;top:608.6px;font-size:11.6px;letter-spacing:0.47px;line-height:16px;color:#0c0c0c;">0.0%</div>
<div class="t" style="left:1439.8px;top:608.6px;font-size:11.6px;letter-spacing:1.64px;line-height:16px;color:#0c0c0c;">2</div>
<div class="t" style="left:1519.8px;top:608.6px;font-size:11.6px;letter-spacing:0.27px;line-height:16px;color:#0c0c0c;">1.2 KB</div>
<div class="t" style="left:1599.8px;top:608.6px;font-size:11.6px;letter-spacing:0.67px;line-height:16px;color:#0c0c0c;">87.59</div>
<div class="t" style="left:1679.8px;top:608.6px;font-size:11.6px;letter-spacing:0.68px;line-height:16px;color:#0c0c0c;">0.01</div>
<div class="t" style="left:59.0px;top:624.6px;font-size:11.6px;letter-spacing:0.36px;line-height:16px;color:#0c0c0c;">CullResults.Cull()</div>
<div class="t" style="left:1279.8px;top:624.6px;font-size:11.6px;letter-spacing:0.51px;line-height:16px;color:#0c0c0c;">80.7%</div>
<div class="t" style="left:1359.8px;top:624.6px;font-size:11.6px;letter-spacing:0.47px;line-height:16px;color:#0c0c0c;">0.0%</div>
<div class="t" style="left:1439.8px;top:624.6px;font-size:11.6px;letter-spacing:1.64px;line-height:16px;color:#0c0c0c;">2</div>
<div class="t" style="left:1519.8px;top:624.6px;font-size:11.6px;letter-spacing:0.61px;line-height:16px;color:#0c0c0c;">0 B</div>
<div class="t" style="left:1599.8px;top:624.6px;font-size:11.6px;letter-spacing:0.67px;line-height:16px;color:#0c0c0c;">85.55</div>
<div class="t" style="left:1679.8px;top:624.6px;font-size:11.6px;letter-spacing:0.68px;line-height:16px;color:#0c0c0c;">0.00</div>
<div class="t" style="left:73.0px;top:640.6px;font-size:11.6px;letter-spacing:0.52px;line-height:16px;color:#0c0c0c;">CullResults.Internal_Cull()</div>
<div class="t" style="left:1279.8px;top:640.6px;font-size:11.6px;letter-spacing:0.51px;line-height:16px;color:#0c0c0c;">80.7%</div>
<div class="t" style="left:1359.8px;top:640.6px;font-size:11.6px;letter-spacing:0.47px;line-height:16px;color:#0c0c0c;">0.0%</div>
<div class="t" style="left:1439.8px;top:640.6px;font-size:11.6px;letter-spacing:1.64px;line-height:16px;color:#0c0c0c;">2</div>
<div class="t" style="left:1519.8px;top:640.6px;font-size:11.6px;letter-spacing:0.61px;line-height:16px;color:#0c0c0c;">0 B</div>
<div class="t" style="left:1599.8px;top:640.6px;font-size:11.6px;letter-spacing:0.67px;line-height:16px;color:#0c0c0c;">85.55</div>
<div class="t" style="left:1679.8px;top:640.6px;font-size:11.6px;letter-spacing:0.68px;line-height:16px;color:#0c0c0c;">0.00</div>
<div class="t" style="left:87.0px;top:656.6px;font-size:11.6px;letter-spacing:0.41px;line-height:16px;color:#0c0c0c;">CullResults.INTERNAL_CALL_Internal_Cull()</div>
<div class="t" style="left:1279.8px;top:656.6px;font-size:11.6px;letter-spacing:0.51px;line-height:16px;color:#0c0c0c;">80.7%</div>
<div class="t" style="left:1359.8px;top:656.6px;font-size:11.6px;letter-spacing:0.47px;line-height:16px;color:#0c0c0c;">0.0%</div>
<div class="t" style="left:1439.8px;top:656.6px;font-size:11.6px;letter-spacing:1.64px;line-height:16px;color:#0c0c0c;">2</div>
<div class="t" style="left:1519.8px;top:656.6px;font-size:11.6px;letter-spacing:0.61px;line-height:16px;color:#0c0c0c;">0 B</div>
<div class="t" style="left:1599.8px;top:656.6px;font-size:11.6px;letter-spacing:0.67px;line-height:16px;color:#0c0c0c;">85.55</div>
<div class="t" style="left:1679.8px;top:656.6px;font-size:11.6px;letter-spacing:0.68px;line-height:16px;color:#0c0c0c;">0.00</div>
<div class="t" style="left:101.0px;top:672.6px;font-size:11.6px;letter-spacing:0.53px;line-height:16px;color:#0c0c0c;">CullScriptable</div>
<div class="t" style="left:1279.8px;top:672.6px;font-size:11.6px;letter-spacing:0.51px;line-height:16px;color:#0c0c0c;">80.7%</div>
<div class="t" style="left:1359.8px;top:672.6px;font-size:11.6px;letter-spacing:0.47px;line-height:16px;color:#0c0c0c;">0.0%</div>
<div class="t" style="left:1439.8px;top:672.6px;font-size:11.6px;letter-spacing:1.64px;line-height:16px;color:#0c0c0c;">2</div>
<div class="t" style="left:1519.8px;top:672.6px;font-size:11.6px;letter-spacing:0.61px;line-height:16px;color:#0c0c0c;">0 B</div>
<div class="t" style="left:1599.8px;top:672.6px;font-size:11.6px;letter-spacing:0.67px;line-height:16px;color:#0c0c0c;">85.54</div>
<div class="t" style="left:1679.8px;top:672.6px;font-size:11.6px;letter-spacing:0.68px;line-height:16px;color:#0c0c0c;">0.01</div>
<div class="abs" style="left:0px;top:688px;width:1780px;height:16px;background:#3361b8"></div>
<div class="t" style="left:115.0px;top:688.6px;font-size:11.6px;letter-spacing:0.46px;line-height:16px;color:#dfe7f5;">SceneCulling</div>
<div class="t" style="left:1279.8px;top:688.6px;font-size:11.6px;letter-spacing:0.51px;line-height:16px;color:#dfe7f5;">79.8%</div>
<div class="t" style="left:1359.8px;top:688.6px;font-size:11.6px;letter-spacing:0.51px;line-height:16px;color:#dfe7f5;">79.6%</div>
<div class="t" style="left:1439.8px;top:688.6px;font-size:11.6px;letter-spacing:1.64px;line-height:16px;color:#dfe7f5;">2</div>
<div class="t" style="left:1519.8px;top:688.6px;font-size:11.6px;letter-spacing:0.61px;line-height:16px;color:#dfe7f5;">0 B</div>
<div class="t" style="left:1599.8px;top:688.6px;font-size:11.6px;letter-spacing:0.67px;line-height:16px;color:#dfe7f5;">84.61</div>
<div class="t" style="left:1679.8px;top:688.6px;font-size:11.6px;letter-spacing:0.67px;line-height:16px;color:#dfe7f5;">84.47</div>
<div class="t" style="left:129.0px;top:704.6px;font-size:11.6px;letter-spacing:0.47px;line-height:16px;color:#0c0c0c;">CullSendEvents</div>
<div class="t" style="left:1279.8px;top:704.6px;font-size:11.6px;letter-spacing:0.47px;line-height:16px;color:#0c0c0c;">0.0%</div>
<div class="t" style="left:1359.8px;top:704.6px;font-size:11.6px;letter-spacing:0.47px;line-height:16px;color:#0c0c0c;">0.0%</div>
<div class="t" style="left:1439.8px;top:704.6px;font-size:11.6px;letter-spacing:1.64px;line-height:16px;color:#0c0c0c;">2</div>
<div class="t" style="left:1519.8px;top:704.6px;font-size:11.6px;letter-spacing:0.61px;line-height:16px;color:#0c0c0c;">0 B</div>
<div class="t" style="left:1599.8px;top:704.6px;font-size:11.6px;letter-spacing:0.68px;line-height:16px;color:#0c0c0c;">0.09</div>
<div class="t" style="left:1679.8px;top:704.6px;font-size:11.6px;letter-spacing:0.68px;line-height:16px;color:#0c0c0c;">0.00</div>
<div class="t" style="left:129.0px;top:720.6px;font-size:11.6px;letter-spacing:0.46px;line-height:16px;color:#0c0c0c;">CullAllVisibleLights</div>
<div class="t" style="left:1279.8px;top:720.6px;font-size:11.6px;letter-spacing:0.47px;line-height:16px;color:#0c0c0c;">0.0%</div>
<div class="t" style="left:1359.8px;top:720.6px;font-size:11.6px;letter-spacing:0.47px;line-height:16px;color:#0c0c0c;">0.0%</div>
<div class="t" style="left:1439.8px;top:720.6px;font-size:11.6px;letter-spacing:1.64px;line-height:16px;color:#0c0c0c;">2</div>
<div class="t" style="left:1519.8px;top:720.6px;font-size:11.6px;letter-spacing:0.61px;line-height:16px;color:#0c0c0c;">0 B</div>
<div class="t" style="left:1599.8px;top:720.6px;font-size:11.6px;letter-spacing:0.68px;line-height:16px;color:#0c0c0c;">0.03</div>
<div class="t" style="left:1679.8px;top:720.6px;font-size:11.6px;letter-spacing:0.68px;line-height:16px;color:#0c0c0c;">0.01</div>
<div class="t" style="left:129.0px;top:736.6px;font-size:11.6px;letter-spacing:0.51px;line-height:16px;color:#0c0c0c;">PrepareSceneNodes</div>
<div class="t" style="left:1279.8px;top:736.6px;font-size:11.6px;letter-spacing:0.47px;line-height:16px;color:#0c0c0c;">0.0%</div>
<div class="t" style="left:1359.8px;top:736.6px;font-size:11.6px;letter-spacing:0.47px;line-height:16px;color:#0c0c0c;">0.0%</div>
<div class="t" style="left:1439.8px;top:736.6px;font-size:11.6px;letter-spacing:1.64px;line-height:16px;color:#0c0c0c;">2</div>
<div class="t" style="left:1519.8px;top:736.6px;font-size:11.6px;letter-spacing:0.61px;line-height:16px;color:#0c0c0c;">0 B</div>
<div class="t" style="left:1599.8px;top:736.6px;font-size:11.6px;letter-spacing:0.68px;line-height:16px;color:#0c0c0c;">0.00</div>
<div class="t" style="left:1679.8px;top:736.6px;font-size:11.6px;letter-spacing:0.68px;line-height:16px;color:#0c0c0c;">0.00</div>
<div class="t" style="left:115.0px;top:752.6px;font-size:11.6px;letter-spacing:0.57px;line-height:16px;color:#0c0c0c;">Terrain.Heightmap.RenderStep3</div>
<div class="t" style="left:1279.8px;top:752.6px;font-size:11.6px;letter-spacing:0.47px;line-height:16px;color:#0c0c0c;">0.3%</div>
<div class="t" style="left:1359.8px;top:752.6px;font-size:11.6px;letter-spacing:0.47px;line-height:16px;color:#0c0c0c;">0.3%</div>
<div class="t" style="left:1439.8px;top:752.6px;font-size:11.6px;letter-spacing:1.64px;line-height:16px;color:#0c0c0c;">2</div>
<div class="t" style="left:1519.8px;top:752.6px;font-size:11.6px;letter-spacing:0.61px;line-height:16px;color:#0c0c0c;">0 B</div>
<div class="t" style="left:1599.8px;top:752.6px;font-size:11.6px;letter-spacing:0.68px;line-height:16px;color:#0c0c0c;">0.40</div>
<div class="t" style="left:1679.8px;top:752.6px;font-size:11.6px;letter-spacing:0.68px;line-height:16px;color:#0c0c0c;">0.40</div>
<div class="t" style="left:115.0px;top:768.6px;font-size:11.6px;letter-spacing:0.50px;line-height:16px;color:#0c0c0c;">CullResults.CreateSharedRendererScene</div>
<div class="t" style="left:1279.8px;top:768.6px;font-size:11.6px;letter-spacing:0.47px;line-height:16px;color:#0c0c0c;">0.1%</div>
<div class="t" style="left:1359.8px;top:768.6px;font-size:11.6px;letter-spacing:0.47px;line-height:16px;color:#0c0c0c;">0.1%</div>
<div class="t" style="left:1439.8px;top:768.6px;font-size:11.6px;letter-spacing:1.64px;line-height:16px;color:#0c0c0c;">2</div>
<div class="t" style="left:1519.8px;top:768.6px;font-size:11.6px;letter-spacing:0.61px;line-height:16px;color:#0c0c0c;">0 B</div>
<div class="t" style="left:1599.8px;top:768.6px;font-size:11.6px;letter-spacing:0.68px;line-height:16px;color:#0c0c0c;">0.20</div>
<div class="t" style="left:1679.8px;top:768.6px;font-size:11.6px;letter-spacing:0.68px;line-height:16px;color:#0c0c0c;">0.11</div>
<div class="t" style="left:115.0px;top:784.6px;font-size:11.6px;letter-spacing:0.57px;line-height:16px;color:#0c0c0c;">Terrain.Heightmap.RenderStep1</div>
<div class="t" style="left:1279.8px;top:784.6px;font-size:11.6px;letter-spacing:0.47px;line-height:16px;color:#0c0c0c;">0.1%</div>
<div class="t" style="left:1359.8px;top:784.6px;font-size:11.6px;letter-spacing:0.47px;line-height:16px;color:#0c0c0c;">0.1%</div>
<div class="t" style="left:1439.8px;top:784.6px;font-size:11.6px;letter-spacing:1.64px;line-height:16px;color:#0c0c0c;">2</div>
<div class="t" style="left:1519.8px;top:784.6px;font-size:11.6px;letter-spacing:0.61px;line-height:16px;color:#0c0c0c;">0 B</div>
<div class="t" style="left:1599.8px;top:784.6px;font-size:11.6px;letter-spacing:0.68px;line-height:16px;color:#0c0c0c;">0.11</div>
<div class="t" style="left:1679.8px;top:784.6px;font-size:11.6px;letter-spacing:0.68px;line-height:16px;color:#0c0c0c;">0.11</div>
<div class="t" style="left:115.0px;top:800.6px;font-size:11.6px;letter-spacing:0.57px;line-height:16px;color:#0c0c0c;">Terrain.Heightmap.RenderStep2</div>
<div class="t" style="left:1279.8px;top:800.6px;font-size:11.6px;letter-spacing:0.47px;line-height:16px;color:#0c0c0c;">0.0%</div>
<div class="t" style="left:1359.8px;top:800.6px;font-size:11.6px;letter-spacing:0.47px;line-height:16px;color:#0c0c0c;">0.0%</div>
<div class="t" style="left:1439.8px;top:800.6px;font-size:11.6px;letter-spacing:1.64px;line-height:16px;color:#0c0c0c;">2</div>
<div class="t" style="left:1519.8px;top:800.6px;font-size:11.6px;letter-spacing:0.61px;line-height:16px;color:#0c0c0c;">0 B</div>
<div class="t" style="left:1599.8px;top:800.6px;font-size:11.6px;letter-spacing:0.68px;line-height:16px;color:#0c0c0c;">0.09</div>
<div class="t" style="left:1679.8px;top:800.6px;font-size:11.6px;letter-spacing:0.68px;line-height:16px;color:#0c0c0c;">0.09</div>
<div class="t" style="left:115.0px;top:816.6px;font-size:11.6px;letter-spacing:0.57px;line-height:16px;color:#0c0c0c;">Terrain.UpdateMaterials</div>
<div class="t" style="left:1279.8px;top:816.6px;font-size:11.6px;letter-spacing:0.47px;line-height:16px;color:#0c0c0c;">0.0%</div>
<div class="t" style="left:1359.8px;top:816.6px;font-size:11.6px;letter-spacing:0.47px;line-height:16px;color:#0c0c0c;">0.0%</div>
<div class="t" style="left:1439.8px;top:816.6px;font-size:11.6px;letter-spacing:1.64px;line-height:16px;color:#0c0c0c;">2</div>
<div class="t" style="left:1519.8px;top:816.6px;font-size:11.6px;letter-spacing:0.61px;line-height:16px;color:#0c0c0c;">0 B</div>
<div class="t" style="left:1599.8px;top:816.6px;font-size:11.6px;letter-spacing:0.68px;line-height:16px;color:#0c0c0c;">0.04</div>
<div class="t" style="left:1679.8px;top:816.6px;font-size:11.6px;letter-spacing:0.68px;line-height:16px;color:#0c0c0c;">0.04</div>
<div class="t" style="left:115.0px;top:832.6px;font-size:11.6px;letter-spacing:0.54px;line-height:16px;color:#0c0c0c;">Terrain.Details.Render</div>
<div class="t" style="left:1279.8px;top:832.6px;font-size:11.6px;letter-spacing:0.47px;line-height:16px;color:#0c0c0c;">0.0%</div>
<div class="t" style="left:1359.8px;top:832.6px;font-size:11.6px;letter-spacing:0.47px;line-height:16px;color:#0c0c0c;">0.0%</div>
<div class="t" style="left:1439.8px;top:832.6px;font-size:11.6px;letter-spacing:1.64px;line-height:16px;color:#0c0c0c;">2</div>
<div class="t" style="left:1519.8px;top:832.6px;font-size:11.6px;letter-spacing:0.61px;line-height:16px;color:#0c0c0c;">0 B</div>
<div class="t" style="left:1599.8px;top:832.6px;font-size:11.6px;letter-spacing:0.68px;line-height:16px;color:#0c0c0c;">0.03</div>
<div class="t" style="left:1679.8px;top:832.6px;font-size:11.6px;letter-spacing:0.68px;line-height:16px;color:#0c0c0c;">0.03</div>
<div class="t" style="left:115.0px;top:848.6px;font-size:11.6px;letter-spacing:0.57px;line-height:16px;color:#0c0c0c;">PrepareSceneCullingParameters</div>
<div class="t" style="left:1279.8px;top:848.6px;font-size:11.6px;letter-spacing:0.47px;line-height:16px;color:#0c0c0c;">0.0%</div>
<div class="t" style="left:1359.8px;top:848.6px;font-size:11.6px;letter-spacing:0.47px;line-height:16px;color:#0c0c0c;">0.0%</div>
<div class="t" style="left:1439.8px;top:848.6px;font-size:11.6px;letter-spacing:1.64px;line-height:16px;color:#0c0c0c;">2</div>
<div class="t" style="left:1519.8px;top:848.6px;font-size:11.6px;letter-spacing:0.61px;line-height:16px;color:#0c0c0c;">0 B</div>
<div class="t" style="left:1599.8px;top:848.6px;font-size:11.6px;letter-spacing:0.68px;line-height:16px;color:#0c0c0c;">0.00</div>
<div class="t" style="left:1679.8px;top:848.6px;font-size:11.6px;letter-spacing:0.68px;line-height:16px;color:#0c0c0c;">0.00</div>
<div class="t" style="left:115.0px;top:864.6px;font-size:11.6px;letter-spacing:0.58px;line-height:16px;color:#0c0c0c;">Terrain.Trees.Render</div>
<div class="t" style="left:1279.8px;top:864.6px;font-size:11.6px;letter-spacing:0.47px;line-height:16px;color:#0c0c0c;">0.0%</div>
<div class="t" style="left:1359.8px;top:864.6px;font-size:11.6px;letter-spacing:0.47px;line-height:16px;color:#0c0c0c;">0.0%</div>
<div class="t" style="left:1439.8px;top:864.6px;font-size:11.6px;letter-spacing:1.64px;line-height:16px;color:#0c0c0c;">2</div>
<div class="t" style="left:1519.8px;top:864.6px;font-size:11.6px;letter-spacing:0.61px;line-height:16px;color:#0c0c0c;">0 B</div>
<div class="t" style="left:1599.8px;top:864.6px;font-size:11.6px;letter-spacing:0.68px;line-height:16px;color:#0c0c0c;">0.00</div>
<div class="t" style="left:1679.8px;top:864.6px;font-size:11.6px;letter-spacing:0.68px;line-height:16px;color:#0c0c0c;">0.00</div>
<div class="t" style="left:115.0px;top:880.6px;font-size:11.6px;letter-spacing:0.63px;line-height:16px;color:#0c0c0c;">PrepareUpdateRendererBoundingVolumes</div>
<div class="t" style="left:1279.8px;top:880.6px;font-size:11.6px;letter-spacing:0.47px;line-height:16px;color:#0c0c0c;">0.0%</div>
<div class="t" style="left:1359.8px;top:880.6px;font-size:11.6px;letter-spacing:0.47px;line-height:16px;color:#0c0c0c;">0.0%</div>
<div class="t" style="left:1439.8px;top:880.6px;font-size:11.6px;letter-spacing:1.64px;line-height:16px;color:#0c0c0c;">2</div>
<div class="t" style="left:1519.8px;top:880.6px;font-size:11.6px;letter-spacing:0.61px;line-height:16px;color:#0c0c0c;">0 B</div>
<div class="t" style="left:1599.8px;top:880.6px;font-size:11.6px;letter-spacing:0.68px;line-height:16px;color:#0c0c0c;">0.00</div>
<div class="t" style="left:1679.8px;top:880.6px;font-size:11.6px;letter-spacing:0.68px;line-height:16px;color:#0c0c0c;">0.00</div>
<div class="t" style="left:115.0px;top:896.6px;font-size:11.6px;letter-spacing:0.57px;line-height:16px;color:#0c0c0c;">FinalizeUpdateRendererBoundingVolumes</div>
<div class="t" style="left:1279.8px;top:896.6px;font-size:11.6px;letter-spacing:0.47px;line-height:16px;color:#0c0c0c;">0.0%</div>
<div class="t" style="left:1359.8px;top:896.6px;font-size:11.6px;letter-spacing:0.47px;line-height:16px;color:#0c0c0c;">0.0%</div>
<div class="t" style="left:1439.8px;top:896.6px;font-size:11.6px;letter-spacing:1.64px;line-height:16px;color:#0c0c0c;">2</div>
<div class="t" style="left:1519.8px;top:896.6px;font-size:11.6px;letter-spacing:0.61px;line-height:16px;color:#0c0c0c;">0 B</div>
<div class="t" style="left:1599.8px;top:896.6px;font-size:11.6px;letter-spacing:0.68px;line-height:16px;color:#0c0c0c;">0.00</div>
<div class="t" style="left:1679.8px;top:896.6px;font-size:11.6px;letter-spacing:0.68px;line-height:16px;color:#0c0c0c;">0.00</div>
<div class="t" style="left:115.0px;top:912.6px;font-size:11.6px;letter-spacing:0.56px;line-height:16px;color:#0c0c0c;">Terrain.FlushDirty</div>
<div class="t" style="left:1279.8px;top:912.6px;font-size:11.6px;letter-spacing:0.47px;line-height:16px;color:#0c0c0c;">0.0%</div>
<div class="t" style="left:1359.8px;top:912.6px;font-size:11.6px;letter-spacing:0.47px;line-height:16px;color:#0c0c0c;">0.0%</div>
<div class="t" style="left:1439.8px;top:912.6px;font-size:11.6px;letter-spacing:1.64px;line-height:16px;color:#0c0c0c;">2</div>
<div class="t" style="left:1519.8px;top:912.6px;font-size:11.6px;letter-spacing:0.61px;line-height:16px;color:#0c0c0c;">0 B</div>
<div class="t" style="left:1599.8px;top:912.6px;font-size:11.6px;letter-spacing:0.68px;line-height:16px;color:#0c0c0c;">0.00</div>
<div class="t" style="left:1679.8px;top:912.6px;font-size:11.6px;letter-spacing:0.68px;line-height:16px;color:#0c0c0c;">0.00</div>
<div class="t" style="left:115.0px;top:928.6px;font-size:11.6px;letter-spacing:0.56px;line-height:16px;color:#0c0c0c;">ReflectionProbeAnchorManagerUpdate</div>
<div class="t" style="left:1279.8px;top:928.6px;font-size:11.6px;letter-spacing:0.47px;line-height:16px;color:#0c0c0c;">0.0%</div>
<div class="t" style="left:1359.8px;top:928.6px;font-size:11.6px;letter-spacing:0.47px;line-height:16px;color:#0c0c0c;">0.0%</div>
<div class="t" style="left:1439.8px;top:928.6px;font-size:11.6px;letter-spacing:1.64px;line-height:16px;color:#0c0c0c;">2</div>
<div class="t" style="left:1519.8px;top:928.6px;font-size:11.6px;letter-spacing:0.61px;line-height:16px;color:#0c0c0c;">0 B</div>
<div class="t" style="left:1599.8px;top:928.6px;font-size:11.6px;letter-spacing:0.68px;line-height:16px;color:#0c0c0c;">0.00</div>
<div class="t" style="left:1679.8px;top:928.6px;font-size:11.6px;letter-spacing:0.68px;line-height:16px;color:#0c0c0c;">0.00</div>
<div class="t" style="left:115.0px;top:944.6px;font-size:11.6px;letter-spacing:0.52px;line-height:16px;color:#0c0c0c;">CullingGroupSendEvents</div>
<div class="t" style="left:1279.8px;top:944.6px;font-size:11.6px;letter-spacing:0.47px;line-height:16px;color:#0c0c0c;">0.0%</div>
<div class="t" style="left:1359.8px;top:944.6px;font-size:11.6px;letter-spacing:0.47px;line-height:16px;color:#0c0c0c;">0.0%</div>
<div class="t" style="left:1439.8px;top:944.6px;font-size:11.6px;letter-spacing:1.64px;line-height:16px;color:#0c0c0c;">2</div>
<div class="t" style="left:1519.8px;top:944.6px;font-size:11.6px;letter-spacing:0.61px;line-height:16px;color:#0c0c0c;">0 B</div>
<div class="t" style="left:1599.8px;top:944.6px;font-size:11.6px;letter-spacing:0.68px;line-height:16px;color:#0c0c0c;">0.00</div>
<div class="t" style="left:1679.8px;top:944.6px;font-size:11.6px;letter-spacing:0.68px;line-height:16px;color:#0c0c0c;">0.00</div>
<div class="t" style="left:115.0px;top:960.6px;font-size:11.6px;letter-spacing:0.51px;line-height:16px;color:#0c0c0c;">ScheduleCullingGroups</div>
<div class="t" style="left:1279.8px;top:960.6px;font-size:11.6px;letter-spacing:0.47px;line-height:16px;color:#0c0c0c;">0.0%</div>
<div class="t" style="left:1359.8px;top:960.6px;font-size:11.6px;letter-spacing:0.47px;line-height:16px;color:#0c0c0c;">0.0%</div>
<div class="t" style="left:1439.8px;top:960.6px;font-size:11.6px;letter-spacing:1.64px;line-height:16px;color:#0c0c0c;">2</div>
<div class="t" style="left:1519.8px;top:960.6px;font-size:11.6px;letter-spacing:0.61px;line-height:16px;color:#0c0c0c;">0 B</div>
<div class="t" style="left:1599.8px;top:960.6px;font-size:11.6px;letter-spacing:0.68px;line-height:16px;color:#0c0c0c;">0.00</div>
<div class="t" style="left:1679.8px;top:960.6px;font-size:11.6px;letter-spacing:0.68px;line-height:16px;color:#0c0c0c;">0.00</div>
<div class="t" style="left:115.0px;top:976.6px;font-size:11.6px;letter-spacing:0.64px;line-height:16px;color:#0c0c0c;">UpdateRendererBoundingVolumes</div>
<div class="t" style="left:1279.8px;top:976.6px;font-size:11.6px;letter-spacing:0.47px;line-height:16px;color:#0c0c0c;">0.0%</div>
<div class="t" style="left:1359.8px;top:976.6px;font-size:11.6px;letter-spacing:0.47px;line-height:16px;color:#0c0c0c;">0.0%</div>
<div class="t" style="left:1439.8px;top:976.6px;font-size:11.6px;letter-spacing:1.14px;line-height:16px;color:#0c0c0c;">22</div>
<div class="t" style="left:1519.8px;top:976.6px;font-size:11.6px;letter-spacing:0.61px;line-height:16px;color:#0c0c0c;">0 B</div>
<div class="t" style="left:1599.8px;top:976.6px;font-size:11.6px;letter-spacing:0.68px;line-height:16px;color:#0c0c0c;">0.00</div>
<div class="t" style="left:1679.8px;top:976.6px;font-size:11.6px;letter-spacing:0.68px;line-height:16px;color:#0c0c0c;">0.00</div>
<div class="t" style="left:101.0px;top:992.6px;font-size:11.6px;letter-spacing:0.44px;line-height:16px;color:#0c0c0c;">CullResultsToVisibleLights</div>
<div class="t" style="left:1279.8px;top:992.6px;font-size:11.6px;letter-spacing:0.47px;line-height:16px;color:#0c0c0c;">0.0%</div>
<div class="t" style="left:1359.8px;top:992.6px;font-size:11.6px;letter-spacing:0.47px;line-height:16px;color:#0c0c0c;">0.0%</div>
<div class="t" style="left:1439.8px;top:992.6px;font-size:11.6px;letter-spacing:1.64px;line-height:16px;color:#0c0c0c;">4</div>
<div class="t" style="left:1519.8px;top:992.6px;font-size:11.6px;letter-spacing:0.61px;line-height:16px;color:#0c0c0c;">0 B</div>
<div class="t" style="left:1599.8px;top:992.6px;font-size:11.6px;letter-spacing:0.68px;line-height:16px;color:#0c0c0c;">0.00</div>
<div class="t" style="left:1679.8px;top:992.6px;font-size:11.6px;letter-spacing:0.68px;line-height:16px;color:#0c0c0c;">0.00</div>
<div class="t" style="left:101.0px;top:1008.6px;font-size:11.6px;letter-spacing:0.47px;line-height:16px;color:#0c0c0c;">CullResultsToVisibleReflectionProbes</div>
<div class="t" style="left:1279.8px;top:1008.6px;font-size:11.6px;letter-spacing:0.47px;line-height:16px;color:#0c0c0c;">0.0%</div>
<div class="t" style="left:1359.8px;top:1008.6px;font-size:11.6px;letter-spacing:0.47px;line-height:16px;color:#0c0c0c;">0.0%</div>
<div class="t" style="left:1439.8px;top:1008.6px;font-size:11.6px;letter-spacing:1.64px;line-height:16px;color:#0c0c0c;">2</div>
<div class="t" style="left:1519.8px;top:1008.6px;font-size:11.6px;letter-spacing:0.61px;line-height:16px;color:#0c0c0c;">0 B</div>
<div class="t" style="left:1599.8px;top:1008.6px;font-size:11.6px;letter-spacing:0.68px;line-height:16px;color:#0c0c0c;">0.00</div>
<div class="t" style="left:1679.8px;top:1008.6px;font-size:11.6px;letter-spacing:0.68px;line-height:16px;color:#0c0c0c;">0.00</div>
<svg style="left:0;top:0" width="300" height="1027"><path d="M4.0 581h8.4l-4.200 8z" fill="#4b4b4b"/><path d="M18.0 597h8.4l-4.200 8z" fill="#4b4b4b"/><path d="M32.0 613h8.4l-4.200 8z" fill="#4b4b4b"/><path d="M46.0 629h8.4l-4.200 8z" fill="#4b4b4b"/><path d="M60.0 645h8.4l-4.200 8z" fill="#4b4b4b"/><path d="M74.0 661h8.4l-4.200 8z" fill="#4b4b4b"/><path d="M88.0 677h8.4l-4.200 8z" fill="#4b4b4b"/><path d="M102.0 693h8.4l-4.200 8z" fill="#1d2e60"/><path d="M116.5 708v9.200l7.400-4.600z" fill="#4b4b4b"/><path d="M116.5 724v9.200l7.400-4.600z" fill="#4b4b4b"/><path d="M102.5 772v9.200l7.400-4.600z" fill="#4b4b4b"/><path d="M102.5 852v9.200l7.400-4.600z" fill="#4b4b4b"/><path d="M102.5 884v9.200l7.400-4.600z" fill="#4b4b4b"/><path d="M102.5 900v9.200l7.400-4.600z" fill="#4b4b4b"/><path d="M102.5 932v9.200l7.400-4.600z" fill="#4b4b4b"/></svg>
<div class="abs" style="left:1780px;top:576px;width:15px;height:451px;background:linear-gradient(90deg,#8e8e8e,#b9b9b9 12%,#b3b3b3 50%,#a0a0a0 85%,#8c8c8c)"></div>
<div class="abs" style="left:1781.5px;top:592px;width:12.5px;height:418px;border-radius:6.2px;background:linear-gradient(90deg,#a8a8a8,#c3c3c3 35%,#bdbdbd 70%,#a4a4a4)"></div>
<div class="abs" style="left:1781.2px;top:594px;width:12.6px;height:79px;border-radius:6.3px;background:linear-gradient(90deg,#56627f,#8490a8 16%,#77849e 45%,#566280 85%,#46526e);border:1px solid #3c4864"></div>
<svg style="left:1783px;top:581px" width="9" height="6" viewBox="0 0 9 6"><path d="M4.500 .5L8.500 5.500H.5z" fill="#333"/></svg>
<svg style="left:1783px;top:1016px" width="9" height="6" viewBox="0 0 9 6"><path d="M4.500 5.500L8.500 .5H.5z" fill="#333"/></svg>
</div>
</body></html>
